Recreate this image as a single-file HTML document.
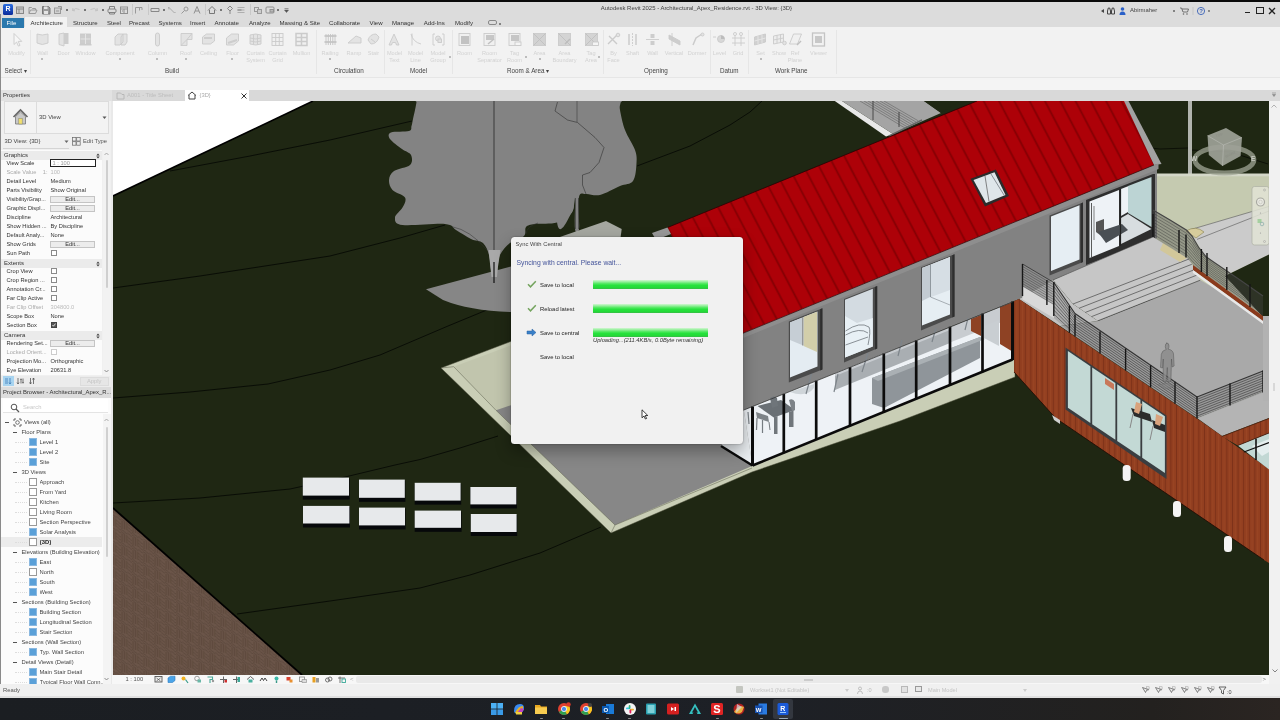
<!DOCTYPE html>
<html><head><meta charset="utf-8"><title>Autodesk Revit 2025</title>
<style>
*{box-sizing:border-box;margin:0;padding:0}
html,body{width:1280px;height:720px;overflow:hidden;background:#000}
body{font-family:"Liberation Sans",sans-serif;font-size:7px;color:#333;position:relative}
#app{position:absolute;left:0;top:0;width:1280px;height:720px;overflow:hidden;background:#f0f0f0;will-change:transform}
.abs{position:absolute}
.t{position:absolute;white-space:nowrap;line-height:1}
/* title / ribbon */
#topblack{left:0;top:0;width:1280px;height:1.6px;background:#0a0a0a}
#titlebar{left:0;top:2px;width:1280px;height:26px;background:#dcdcdc}
#ribbon{left:0;top:27px;width:1280px;height:50px;background:#f2f2f2}
#optbar{left:0;top:77px;width:1280px;height:13px;background:#f4f4f4;border-top:1px solid #e6e6e6}
#tabbar{left:0;top:90px;width:1280px;height:11px;background:#d9d9d9}
.rt{position:absolute;top:19.1px;font-size:6.1px;color:#333;white-space:nowrap;line-height:8px}
.rl{position:absolute;font-size:5.6px;color:#d2d2d2;white-space:nowrap;line-height:7px;text-align:center}
.pt{position:absolute;top:67px;font-size:6.3px;color:#444;white-space:nowrap;line-height:8px}
/* left panel */
#left{left:0;top:90px;width:112px;height:594px;background:#f0f0f0}
.pl{position:absolute;left:6.5px;font-size:5.7px;color:#333;white-space:nowrap;line-height:9px;height:9px}
.pv{position:absolute;left:50.5px;font-size:5.7px;color:#333;white-space:nowrap;line-height:9px;height:9px}
.ph{position:absolute;left:1px;width:101px;height:9px;background:#ebebeb;font-size:6px;line-height:9px;padding-left:3px;color:#333}
.btn{position:absolute;left:50px;width:45px;height:7px;border:1px solid #c4c4c4;background:#ececec;font-size:5.7px;line-height:5.5px;text-align:center;color:#333}
.cb{position:absolute;left:51px;width:6px;height:6px;border:1px solid #8a8a8a;background:#fff}
.tr{position:absolute;font-size:5.8px;color:#444;white-space:nowrap;line-height:10px;height:10px}
.ic{position:absolute;left:29px;width:8px;height:8px;border:1px solid #999;background:#fff}
.ic.b{background:#5aa0d8;border-color:#8ab8e0}
.mn{position:absolute;width:4px;height:1px;background:#555}
</style></head><body><div id="app">
<svg class="abs" style="left:113px;top:101px" width="1156" height="574" viewBox="113 101 1156 574">
<defs>
<pattern id="hatch" width="11" height="13" patternUnits="userSpaceOnUse" patternTransform="skewY(18)"><rect width="11" height="13" fill="#6b5549"/><path d="M1 0v8M3.300 0v8M5.600 0v8" stroke="#574338" stroke-width=".900"/><path d="M6.500 1.500l4.500 2.500M6.500 4.500l4.500 2.500M6.500 7.500l4.500 2.500M0 8.500l6.500 3.500M0 11l4 2M6.500 10.500l4.500 2.500" stroke="#5a463b" stroke-width=".900"/></pattern>
<pattern id="clad" width="5.600" height="10" patternUnits="userSpaceOnUse"><rect width="5.600" height="10" fill="#933f20"/><rect x="0" width="0.9" height="10" fill="#7c3118"/><rect x="2.8" width="0.6" height="10" fill="#9c4826"/></pattern>
<linearGradient id="pg" x1="0" y1="0" x2="0" y2="1"><stop offset="0" stop-color="#d2f6d2"/><stop offset="0.18" stop-color="#9cf0a2"/><stop offset="0.42" stop-color="#4ce85c"/><stop offset="0.6" stop-color="#26e23c"/><stop offset="0.86" stop-color="#24d838"/><stop offset="1" stop-color="#3cb84a"/></linearGradient>
<clipPath id="roofclip"><polygon points="667.5,227.5 977,101 1124.6,101 1154,165 724,341"/></clipPath>
<clipPath id="vp"><rect x="113" y="101" width="1156" height="574"/></clipPath>
</defs>
<g clip-path="url(#vp)">
<rect x="113" y="101" width="1156" height="574" fill="#1f2713"/>
<polygon points="113.0,101.0 313.0,101.0 113.0,196.0" fill="#ffffff" />
<polyline points="313.0,101.0 113.0,196.0" fill="none" stroke="#000" stroke-width="1.6" />
<polyline points="170.0,171.0 250.0,156.0 330.0,140.0 412.0,121.0" fill="none" stroke="#070a04" stroke-width="0.9" />
<polyline points="113.0,288.0 200.0,276.0 330.0,256.0 400.0,238.0 445.0,225.0" fill="none" stroke="#070a04" stroke-width="0.9" />
<polyline points="113.0,398.0 190.0,392.0 268.0,384.0 330.0,370.0 380.0,355.0 448.0,326.0 511.0,300.0" fill="none" stroke="#070a04" stroke-width="0.9" />
<polyline points="113.0,503.0 200.0,498.0 290.0,489.0 345.0,477.0 395.0,465.0 420.0,459.5 460.0,448.0 498.0,436.0" fill="none" stroke="#070a04" stroke-width="0.9" />
<polyline points="237.0,614.0 330.0,601.0 420.0,588.0 470.0,575.0 540.0,553.0 601.0,527.0" fill="none" stroke="#070a04" stroke-width="0.9" />
<polyline points="637.0,166.0 690.0,146.0 730.0,125.0 750.0,112.0 762.0,101.0" fill="none" stroke="#070a04" stroke-width="0.9" />
<polyline points="1131.0,146.0 1160.0,149.0 1188.0,148.0" fill="none" stroke="#070a04" stroke-width="0.8" />
<polyline points="1192.0,150.0 1230.0,152.0 1268.0,164.0" fill="none" stroke="#070a04" stroke-width="0.8" />
<polygon points="113.0,508.0 302.0,675.0 113.0,675.0" fill="url(#hatch)" />
<polyline points="113.0,508.0 302.0,675.0" fill="none" stroke="#000" stroke-width="1.8" />
<path d="M557.0 96.0 C567.7 75.0 610.4 94.8 621.0 96.0 C631.6 97.2 620.7 100.7 620.5 103.0 C620.3 105.3 619.2 105.5 620.0 110.0 C620.8 114.5 622.5 123.3 625.0 130.0 C627.5 136.7 633.1 144.5 635.0 150.0 C636.9 155.5 636.8 157.8 636.5 163.0 C636.2 168.2 635.8 177.2 633.0 181.0 C630.2 184.8 625.5 183.7 620.0 186.0 C614.5 188.3 605.7 193.7 600.0 195.0 C594.3 196.3 589.5 193.7 586.0 194.0 C582.5 194.3 580.2 191.2 579.0 197.0 C577.8 202.8 579.7 223.7 579.0 229.0 C578.3 234.3 575.7 234.2 575.0 229.0 C574.3 223.8 575.5 200.8 575.0 198.0 C574.5 195.2 575.0 208.0 572.0 212.0 C569.0 216.0 559.5 241.3 557.0 222.0 C554.5 202.7 546.3 117.0 557.0 96.0Z" fill="#838383" />
<path d="M416.5 96.0 C392.9 97.0 416.8 99.7 416.5 102.0 C416.2 104.3 415.6 107.2 415.0 110.0 C414.4 112.8 413.6 116.3 413.0 119.0 C412.4 121.7 412.2 124.0 411.5 126.0 C410.8 128.0 412.4 129.9 409.0 131.0 C405.6 132.1 394.2 131.2 391.0 132.5 C387.8 133.8 388.2 136.2 390.0 139.0 C391.8 141.8 398.5 146.3 402.0 149.0 C405.5 151.7 409.7 152.3 411.0 155.0 C412.3 157.7 412.8 162.3 410.0 165.0 C407.2 167.7 397.5 168.5 394.0 171.0 C390.5 173.5 389.2 176.8 389.0 180.0 C388.8 183.2 389.8 187.1 392.5 190.0 C395.2 192.9 403.3 194.6 405.0 197.5 C406.7 200.4 404.2 204.2 402.5 207.5 C400.8 210.8 395.0 214.6 395.0 217.5 C395.0 220.4 394.2 223.9 402.5 225.0 C410.8 226.1 436.1 223.2 445.0 224.0 C453.9 224.8 451.7 227.5 456.0 230.0 C460.3 232.5 466.5 236.8 471.0 239.0 C475.5 241.2 480.0 240.3 483.0 243.0 C486.0 245.7 487.7 250.5 489.0 255.0 C490.3 259.5 490.6 266.3 491.0 270.0 C491.4 273.7 490.5 275.8 491.5 277.0 C492.5 278.2 496.0 278.2 497.0 277.0 C498.0 275.8 497.0 273.7 497.5 270.0 C498.0 266.3 497.9 259.5 500.0 255.0 C502.1 250.5 506.0 246.2 510.0 243.0 C514.0 239.8 521.3 238.7 524.0 236.0 C526.7 233.3 524.2 229.0 526.0 227.0 C527.8 225.0 529.8 224.8 535.0 224.0 C540.2 223.2 550.8 224.4 557.0 222.5 C563.2 220.6 569.0 216.8 572.0 212.5 C575.0 208.2 573.3 201.6 575.0 197.0 C576.7 192.4 580.8 188.7 582.0 185.0 C583.2 181.3 581.2 177.1 582.5 175.0 C583.8 172.9 587.2 174.6 590.0 172.5 C592.8 170.4 596.7 166.7 599.0 162.5 C601.3 158.3 604.7 151.7 604.0 147.5 C603.3 143.3 599.4 141.7 595.0 137.5 C590.6 133.3 582.2 125.4 577.5 122.5 C572.8 119.6 570.8 121.9 567.0 120.0 C563.2 118.1 556.7 113.7 555.0 111.0 C553.3 108.3 556.5 106.5 557.0 104.0 C557.5 101.5 581.4 97.3 558.0 96.0 C534.6 94.7 440.1 95.0 416.5 96.0Z" fill="#838383" />
<polyline points="557.5,102.0 555.0,111.0 567.5,120.0 577.5,122.5 595.0,137.5 604.0,147.5 599.0,162.5 590.0,172.5 582.5,175.0 582.5,185.0 586.0,194.0" fill="none" stroke="#222" stroke-width="0.5" />
<polyline points="494.0,101.0 494.0,277.0" fill="none" stroke="#1a1a1a" stroke-width="0.7" />
<polyline points="494.0,262.0 494.0,277.0" fill="none" stroke="#111" stroke-width="1.4" />
<polyline points="577.0,101.0 577.0,122.0" fill="none" stroke="#333" stroke-width="0.5" />
<polyline points="575.5,198.0 575.5,229.0" fill="none" stroke="#333" stroke-width="0.6" />
<polyline points="578.5,198.0 578.5,229.0" fill="none" stroke="#333" stroke-width="0.6" />
<path d="M452 226.7 Q470 230 487 250" fill="none" stroke="#333" stroke-width="0.5" />
<path d="M526 234 Q527 226 538 223" fill="none" stroke="#333" stroke-width="0.5" />
<path d="M426 289.3 L512 266.3 L512 312 Q470 311 443 300 Z" fill="#868686" />
<polygon points="557.0,238.0 606.0,221.0 621.7,229.0 620.5,238.0" fill="#a5a7a0" />
<polygon points="488.5,250.0 490.5,268.0 491.5,277.0 497.0,277.0 497.8,268.0 500.5,250.0" fill="#a9a9a9" />
<polyline points="494.0,262.0 494.0,283.0" fill="none" stroke="#111" stroke-width="1.2" />
<polygon points="441.0,368.0 520.0,338.0 760.0,338.0 1015.0,360.0 1015.0,377.0 900.0,421.0 830.0,445.0 800.0,455.5 752.0,472.0 611.0,533.0" fill="#c9ceb6" stroke="#4a4d3a" stroke-width="0.5" />
<polygon points="453.7,366.7 520.0,342.0 520.0,404.0 496.0,410.3" fill="#c1c5ad" />
<polygon points="496.0,410.3 520.0,402.0 760.0,402.0 752.0,466.0 615.0,525.0" fill="#878787" />
<polyline points="453.7,366.7 496.0,410.3 615.0,525.0" fill="none" stroke="#5a5d4a" stroke-width="0.5" />
<polyline points="615.0,525.0 752.0,468.0" fill="none" stroke="#5a5d4a" stroke-width="0.5" />
<polyline points="441.0,368.0 453.7,366.7" fill="none" stroke="#5a5d4a" stroke-width="0.5" />
<polyline points="611.0,533.0 615.0,525.0" fill="none" stroke="#5a5d4a" stroke-width="0.5" />
<rect x="302.8" y="478.6" width="46.9" height="21.0" fill="#06080a"/>
<rect x="302.8" y="477.6" width="46.2" height="18.0" fill="#e7e9eb"/>
<rect x="359.0" y="480.6" width="46.4" height="21.2" fill="#06080a"/>
<rect x="359.0" y="479.6" width="45.8" height="18.2" fill="#e7e9eb"/>
<rect x="414.7" y="483.8" width="46.5" height="20.8" fill="#06080a"/>
<rect x="414.7" y="482.8" width="45.9" height="17.8" fill="#e7e9eb"/>
<rect x="470.4" y="488.0" width="46.5" height="20.4" fill="#06080a"/>
<rect x="470.4" y="487.0" width="45.9" height="17.4" fill="#e7e9eb"/>
<rect x="303.0" y="506.9" width="47.0" height="20.6" fill="#06080a"/>
<rect x="303.0" y="505.9" width="46.4" height="17.6" fill="#e7e9eb"/>
<rect x="359.0" y="508.6" width="46.6" height="20.8" fill="#06080a"/>
<rect x="359.0" y="507.6" width="46.0" height="17.8" fill="#e7e9eb"/>
<rect x="414.7" y="511.6" width="46.9" height="20.2" fill="#06080a"/>
<rect x="414.7" y="510.6" width="46.3" height="17.2" fill="#e7e9eb"/>
<rect x="470.8" y="515.0" width="46.4" height="21.0" fill="#06080a"/>
<rect x="470.8" y="514.0" width="45.8" height="18.0" fill="#e7e9eb"/>
<polygon points="834.8,101.0 842.0,101.0 893.0,134.0 886.0,136.5" fill="#e8e8e8" />
<polygon points="842.0,101.0 924.0,101.0 941.0,113.0 893.0,134.0" fill="#a4a4a4" />
<polyline points="860.0,101.0 905.0,128.0" fill="none" stroke="#444" stroke-width="0.4" />
<polyline points="864.0,101.0 907.2,126.8" fill="none" stroke="#444" stroke-width="0.4" />
<polyline points="868.0,101.0 909.4,125.6" fill="none" stroke="#444" stroke-width="0.4" />
<polyline points="872.0,101.0 911.6,124.4" fill="none" stroke="#444" stroke-width="0.4" />
<polyline points="876.0,101.0 913.8,123.2" fill="none" stroke="#444" stroke-width="0.4" />
<polyline points="880.0,101.0 916.0,122.0" fill="none" stroke="#444" stroke-width="0.4" />
<polyline points="884.0,101.0 918.2,120.8" fill="none" stroke="#444" stroke-width="0.4" />
<polyline points="873.0,101.0 873.0,120.0" fill="none" stroke="#333" stroke-width="0.8" />
<polyline points="899.0,112.0 899.0,127.0" fill="none" stroke="#333" stroke-width="0.8" />
<polyline points="889.0,136.0 922.0,120.0" fill="none" stroke="#666" stroke-width="1.5" />
<polygon points="924.0,101.0 960.0,101.0 941.0,113.0" fill="#1f2713" />
<rect x="1188" y="101" width="4" height="74" fill="#b2b4ae"/>
<polygon points="1153.0,176.0 1269.0,176.0 1269.0,330.0 1153.0,330.0" fill="#c5cab0" />
<rect x="1153" y="173.5" width="116" height="2.8" fill="#d4d7c8"/>
<polygon points="1188.7,230.0 1269.0,206.5 1269.0,254.5 1231.0,273.0 1206.0,256.7 1195.0,240.0" fill="#cbcbcb" />
<polyline points="1190.0,229.8 1269.0,206.5" fill="none" stroke="#555" stroke-width="0.6" />
<polyline points="1197.0,239.4 1269.0,211.0" fill="none" stroke="#555" stroke-width="0.6" />
<polygon points="1231.0,273.0 1269.0,254.5 1269.0,330.0 1263.0,317.0 1225.0,276.0" fill="#1f2713" />
<path d="M1186 231 Q1196 225 1204 232 L1196 238Z" fill="#d6cc9c" stroke="#7a7440" stroke-width="0.5" />
<polygon points="700.0,352.0 743.8,333.0 752.5,466.0 721.0,446.0" fill="#9a9a9a" />
<polygon points="743.0,333.0 1157.0,167.0 1157.0,238.0 1053.0,280.0 1019.0,299.0 743.8,410.0" fill="#828282" />
<polygon points="743.8,410.0 1012.5,302.0 1012.5,360.0 752.5,466.0" fill="#eef2f6" />
<polygon points="721.0,446.0 743.8,410.0 752.5,466.0" fill="#e9edf0" />
<polygon points="835.0,373.0 1012.0,303.0 1012.0,318.0 835.0,388.0" fill="#c8ccd0" />
<polygon points="835.0,376.0 950.0,330.0 950.0,343.0 835.0,390.0" fill="#a9aeb2" />
<polygon points="872.0,378.0 980.0,337.0 980.0,358.0 884.0,408.0 872.0,404.0" fill="#8f959a" />
<polygon points="872.0,378.0 980.0,337.0 985.0,339.0 878.0,381.0" fill="#aab0b4" />
<polygon points="1000.0,307.0 1011.5,302.5 1011.5,351.0 1000.0,344.0" fill="#8e4224" />
<polygon points="971.0,319.0 981.0,315.0 981.0,336.0 971.0,331.0" fill="#8e4224" />
<polygon points="984.0,326.0 999.0,320.0 999.0,346.0 984.0,338.0" fill="#c9ced2" />
<polygon points="757.5,406.0 781.0,400.0 795.0,410.0 773.8,417.5" fill="#6a7075" />
<polygon points="774.0,417.0 777.5,416.0 777.5,434.0 774.0,434.0" fill="#70767b" />
<polygon points="789.0,412.0 793.5,410.5 793.5,427.0 789.0,427.0" fill="#70767b" />
<polygon points="756.0,412.0 768.0,416.0 769.0,422.0 757.0,418.0" fill="#7d8388" />
<polyline points="757.0,418.0 756.5,430.0" fill="none" stroke="#767c81" stroke-width="1.2" />
<polyline points="762.5,420.0 762.5,433.0" fill="none" stroke="#767c81" stroke-width="1.2" />
<polyline points="769.0,422.0 770.0,430.0" fill="none" stroke="#767c81" stroke-width="1" />
<path d="M789 400 q4 -2 6 2 l0 8 l-3 1 z" fill="#7d8388" />
<path d="M770 398 q4 -3 7 0 l1 8 l-6 2 z" fill="#6f757a" />
<polyline points="748.0,412.0 749.0,424.0" fill="none" stroke="#7d8388" stroke-width="1.2" />
<path d="M790 392 Q806 398 814 388 L814 384 L790 392Z" fill="#cfd5d9" />
<polyline points="812.0,372.0 806.0,394.0" fill="none" stroke="#7d848a" stroke-width="1.2" />
<polyline points="838.0,374.0 834.0,392.0" fill="none" stroke="#7d848a" stroke-width="1.2" />
<polyline points="868.0,353.0 862.0,372.0" fill="none" stroke="#7d848a" stroke-width="1.2" />
<polyline points="902.0,340.0 898.0,356.0" fill="none" stroke="#7d848a" stroke-width="1.2" />
<polyline points="936.0,328.0 932.0,342.0" fill="none" stroke="#7d848a" stroke-width="1.2" />
<polyline points="968.0,318.0 965.0,330.0" fill="none" stroke="#7d848a" stroke-width="1.2" />
<polyline points="752.5,406.5 752.5,466.0" fill="none" stroke="#0c0c0c" stroke-width="3" />
<polyline points="783.8,393.9 783.8,453.3" fill="none" stroke="#0c0c0c" stroke-width="2.7" />
<polyline points="816.2,380.7 816.2,440.0" fill="none" stroke="#0c0c0c" stroke-width="2.7" />
<polyline points="850.0,367.1 850.0,426.2" fill="none" stroke="#0c0c0c" stroke-width="2.7" />
<polyline points="883.8,353.5 883.8,412.5" fill="none" stroke="#0c0c0c" stroke-width="2.7" />
<polyline points="916.2,340.4 916.2,399.2" fill="none" stroke="#0c0c0c" stroke-width="2.7" />
<polyline points="950.0,326.7 950.0,385.5" fill="none" stroke="#0c0c0c" stroke-width="2.7" />
<polyline points="982.5,313.6 982.5,372.2" fill="none" stroke="#0c0c0c" stroke-width="2.7" />
<polyline points="1012.5,301.5 1012.5,360.0" fill="none" stroke="#0c0c0c" stroke-width="3" />
<polyline points="752.5,465.5 1012.5,359.5" fill="none" stroke="#0a0a0a" stroke-width="2.6" />
<polyline points="721.0,446.0 752.5,465.5" fill="none" stroke="#0a0a0a" stroke-width="2.4" />
<polyline points="743.8,410.0 1012.5,302.0" fill="none" stroke="#333" stroke-width="0.8" />
<polygon points="788.8,321.5 822.4,308.3 822.4,369.5 788.8,382.5" fill="#4b4b4b" />
<polygon points="822.4,308.3 822.4,369.5 820.2,370.4 820.2,309.2" fill="#2e2e2e" />
<polygon points="790.0,322.5 817.5,311.5 817.5,366.5 790.0,377.5" fill="#e4ecf2" />
<polygon points="790.0,322.5 802.0,317.7 802.0,345.0 790.0,340.0" fill="#c6ced5" />
<polygon points="803.6,317.0 817.0,311.7 817.0,352.0 803.6,346.0" fill="#d2ceaa" />
<polyline points="802.8,317.5 802.8,345.5" fill="none" stroke="#6a6a6a" stroke-width="0.9" />
<polygon points="844.0,299.0 877.2,286.0 877.2,348.5 844.0,362.5" fill="#4b4b4b" />
<polygon points="877.2,286.0 877.2,348.5 875.0,349.4 875.0,286.9" fill="#2e2e2e" />
<polygon points="845.0,299.8 872.8,288.7 872.8,346.5 845.0,357.6" fill="#d3dbe1" />
<polygon points="845.0,316.0 857.0,323.0 872.8,318.0 872.8,346.5 845.0,357.6" fill="#e8f0f5" />
<path d="M845.500 331 Q860 321 869 327 Q871 331 868 345 M845.500 335 Q860 327 868 333 M845.500 345 L868 337" fill="none" stroke="#5e666c" stroke-width="0.7" />
<polygon points="921.0,267.3 954.5,254.3 954.5,316.5 921.0,330.5" fill="#4b4b4b" />
<polygon points="954.5,254.3 954.5,316.5 952.3,317.4 952.3,255.2" fill="#2e2e2e" />
<polygon points="922.0,268.0 950.0,257.0 950.0,314.5 922.0,325.5" fill="#e6eef3" />
<polygon points="922.0,268.0 930.0,265.0 930.0,297.0 922.0,301.0" fill="#c3cbd2" />
<polygon points="931.0,264.5 950.0,257.0 950.0,290.0 931.0,297.0" fill="#d6dee4" />
<polyline points="930.5,265.0 930.5,297.0" fill="none" stroke="#7a8288" stroke-width="0.8" />
<polyline points="930.5,297.0 950.0,305.0" fill="none" stroke="#7a8288" stroke-width="0.6" />
<polygon points="1049.5,215.5 1083.0,202.5 1083.0,262.0 1049.5,275.5" fill="#4b4b4b" />
<polygon points="1083.0,202.5 1083.0,262.0 1080.8,262.9 1080.8,203.4" fill="#2e2e2e" />
<polygon points="1051.0,216.5 1079.5,205.3 1079.5,259.5 1051.0,271.0" fill="#e6eef3" />
<polygon points="1086.0,200.0 1153.0,174.0 1155.0,174.0 1155.0,238.0 1086.0,265.0" fill="#2e2e2e" />
<polygon points="1089.5,201.5 1119.0,190.0 1119.0,246.0 1089.5,258.0" fill="#eef2f6" />
<polygon points="1121.0,189.0 1128.0,186.3 1128.0,212.0 1121.0,216.0" fill="#eef2f6" />
<polygon points="1128.0,186.0 1151.5,177.0 1151.5,227.0 1128.0,213.0" fill="#bcd4d4" />
<polygon points="1121.0,218.0 1128.0,214.0 1151.5,229.0 1121.0,244.0" fill="#d8dde0" />
<polygon points="1096.0,222.0 1104.0,219.0 1104.0,238.0 1096.0,232.0" fill="#555" />
<polygon points="1098.0,232.0 1122.0,224.0 1128.0,230.0 1106.0,243.0" fill="#4a4f54" />
<polyline points="1120.5,189.0 1120.5,246.0" fill="none" stroke="#222" stroke-width="1.2" />
<polyline points="1091.5,203.0 1091.5,257.0" fill="none" stroke="#333" stroke-width="0.8" />
<polyline points="1094.0,206.0 1094.0,240.0" fill="none" stroke="#333" stroke-width="0.6" />
<polygon points="667.5,227.5 977.0,101.0 1124.6,101.0 1154.0,165.0 724.0,341.0" fill="#ad0108" />
<g clip-path="url(#roofclip)">
<path d="M667.5 227.5l84 160" stroke="#8a0006" stroke-width="2.4" opacity=".6"/>
<path d="M667.5 227.5l84 160" stroke="#7e0005" stroke-width="1" opacity=".7"/>
<path d="M680.1 222.4l84 160" stroke="#8a0006" stroke-width="2.4" opacity=".6"/>
<path d="M680.1 222.4l84 160" stroke="#7e0005" stroke-width="1" opacity=".7"/>
<path d="M692.7 217.2l84 160" stroke="#8a0006" stroke-width="2.4" opacity=".6"/>
<path d="M692.7 217.2l84 160" stroke="#7e0005" stroke-width="1" opacity=".7"/>
<path d="M705.3 212.1l84 160" stroke="#8a0006" stroke-width="2.4" opacity=".6"/>
<path d="M705.3 212.1l84 160" stroke="#7e0005" stroke-width="1" opacity=".7"/>
<path d="M717.9 206.9l84 160" stroke="#8a0006" stroke-width="2.4" opacity=".6"/>
<path d="M717.9 206.9l84 160" stroke="#7e0005" stroke-width="1" opacity=".7"/>
<path d="M730.5 201.8l84 160" stroke="#8a0006" stroke-width="2.4" opacity=".6"/>
<path d="M730.5 201.8l84 160" stroke="#7e0005" stroke-width="1" opacity=".7"/>
<path d="M743.1 196.6l84 160" stroke="#8a0006" stroke-width="2.4" opacity=".6"/>
<path d="M743.1 196.6l84 160" stroke="#7e0005" stroke-width="1" opacity=".7"/>
<path d="M755.7 191.5l84 160" stroke="#8a0006" stroke-width="2.4" opacity=".6"/>
<path d="M755.7 191.5l84 160" stroke="#7e0005" stroke-width="1" opacity=".7"/>
<path d="M768.3 186.3l84 160" stroke="#8a0006" stroke-width="2.4" opacity=".6"/>
<path d="M768.3 186.3l84 160" stroke="#7e0005" stroke-width="1" opacity=".7"/>
<path d="M780.9 181.2l84 160" stroke="#8a0006" stroke-width="2.4" opacity=".6"/>
<path d="M780.9 181.2l84 160" stroke="#7e0005" stroke-width="1" opacity=".7"/>
<path d="M793.5 176.0l84 160" stroke="#8a0006" stroke-width="2.4" opacity=".6"/>
<path d="M793.5 176.0l84 160" stroke="#7e0005" stroke-width="1" opacity=".7"/>
<path d="M806.1 170.9l84 160" stroke="#8a0006" stroke-width="2.4" opacity=".6"/>
<path d="M806.1 170.9l84 160" stroke="#7e0005" stroke-width="1" opacity=".7"/>
<path d="M818.7 165.7l84 160" stroke="#8a0006" stroke-width="2.4" opacity=".6"/>
<path d="M818.7 165.7l84 160" stroke="#7e0005" stroke-width="1" opacity=".7"/>
<path d="M831.3 160.6l84 160" stroke="#8a0006" stroke-width="2.4" opacity=".6"/>
<path d="M831.3 160.6l84 160" stroke="#7e0005" stroke-width="1" opacity=".7"/>
<path d="M843.9 155.4l84 160" stroke="#8a0006" stroke-width="2.4" opacity=".6"/>
<path d="M843.9 155.4l84 160" stroke="#7e0005" stroke-width="1" opacity=".7"/>
<path d="M856.5 150.3l84 160" stroke="#8a0006" stroke-width="2.4" opacity=".6"/>
<path d="M856.5 150.3l84 160" stroke="#7e0005" stroke-width="1" opacity=".7"/>
<path d="M869.1 145.1l84 160" stroke="#8a0006" stroke-width="2.4" opacity=".6"/>
<path d="M869.1 145.1l84 160" stroke="#7e0005" stroke-width="1" opacity=".7"/>
<path d="M881.7 140.0l84 160" stroke="#8a0006" stroke-width="2.4" opacity=".6"/>
<path d="M881.7 140.0l84 160" stroke="#7e0005" stroke-width="1" opacity=".7"/>
<path d="M894.3 134.8l84 160" stroke="#8a0006" stroke-width="2.4" opacity=".6"/>
<path d="M894.3 134.8l84 160" stroke="#7e0005" stroke-width="1" opacity=".7"/>
<path d="M906.9 129.7l84 160" stroke="#8a0006" stroke-width="2.4" opacity=".6"/>
<path d="M906.9 129.7l84 160" stroke="#7e0005" stroke-width="1" opacity=".7"/>
<path d="M919.5 124.5l84 160" stroke="#8a0006" stroke-width="2.4" opacity=".6"/>
<path d="M919.5 124.5l84 160" stroke="#7e0005" stroke-width="1" opacity=".7"/>
<path d="M932.1 119.4l84 160" stroke="#8a0006" stroke-width="2.4" opacity=".6"/>
<path d="M932.1 119.4l84 160" stroke="#7e0005" stroke-width="1" opacity=".7"/>
<path d="M944.7 114.2l84 160" stroke="#8a0006" stroke-width="2.4" opacity=".6"/>
<path d="M944.7 114.2l84 160" stroke="#7e0005" stroke-width="1" opacity=".7"/>
<path d="M957.3 109.1l84 160" stroke="#8a0006" stroke-width="2.4" opacity=".6"/>
<path d="M957.3 109.1l84 160" stroke="#7e0005" stroke-width="1" opacity=".7"/>
<path d="M969.9 103.9l84 160" stroke="#8a0006" stroke-width="2.4" opacity=".6"/>
<path d="M969.9 103.9l84 160" stroke="#7e0005" stroke-width="1" opacity=".7"/>
<path d="M982.5 98.8l84 160" stroke="#8a0006" stroke-width="2.4" opacity=".6"/>
<path d="M982.5 98.8l84 160" stroke="#7e0005" stroke-width="1" opacity=".7"/>
<path d="M995.1 93.6l84 160" stroke="#8a0006" stroke-width="2.4" opacity=".6"/>
<path d="M995.1 93.6l84 160" stroke="#7e0005" stroke-width="1" opacity=".7"/>
<path d="M1007.7 88.5l84 160" stroke="#8a0006" stroke-width="2.4" opacity=".6"/>
<path d="M1007.7 88.5l84 160" stroke="#7e0005" stroke-width="1" opacity=".7"/>
<path d="M1020.3 83.3l84 160" stroke="#8a0006" stroke-width="2.4" opacity=".6"/>
<path d="M1020.3 83.3l84 160" stroke="#7e0005" stroke-width="1" opacity=".7"/>
<path d="M1032.9 78.2l84 160" stroke="#8a0006" stroke-width="2.4" opacity=".6"/>
<path d="M1032.9 78.2l84 160" stroke="#7e0005" stroke-width="1" opacity=".7"/>
<path d="M1045.5 73.0l84 160" stroke="#8a0006" stroke-width="2.4" opacity=".6"/>
<path d="M1045.5 73.0l84 160" stroke="#7e0005" stroke-width="1" opacity=".7"/>
<path d="M1058.1 67.9l84 160" stroke="#8a0006" stroke-width="2.4" opacity=".6"/>
<path d="M1058.1 67.9l84 160" stroke="#7e0005" stroke-width="1" opacity=".7"/>
<path d="M1070.7 62.7l84 160" stroke="#8a0006" stroke-width="2.4" opacity=".6"/>
<path d="M1070.7 62.7l84 160" stroke="#7e0005" stroke-width="1" opacity=".7"/>
<path d="M1083.3 57.6l84 160" stroke="#8a0006" stroke-width="2.4" opacity=".6"/>
<path d="M1083.3 57.6l84 160" stroke="#7e0005" stroke-width="1" opacity=".7"/>
<path d="M1095.9 52.4l84 160" stroke="#8a0006" stroke-width="2.4" opacity=".6"/>
<path d="M1095.9 52.4l84 160" stroke="#7e0005" stroke-width="1" opacity=".7"/>
<path d="M1108.5 47.3l84 160" stroke="#8a0006" stroke-width="2.4" opacity=".6"/>
<path d="M1108.5 47.3l84 160" stroke="#7e0005" stroke-width="1" opacity=".7"/>
<path d="M1121.1 42.1l84 160" stroke="#8a0006" stroke-width="2.4" opacity=".6"/>
<path d="M1121.1 42.1l84 160" stroke="#7e0005" stroke-width="1" opacity=".7"/>
<path d="M1133.7 37.0l84 160" stroke="#8a0006" stroke-width="2.4" opacity=".6"/>
<path d="M1133.7 37.0l84 160" stroke="#7e0005" stroke-width="1" opacity=".7"/>
<path d="M1146.3 31.8l84 160" stroke="#8a0006" stroke-width="2.4" opacity=".6"/>
<path d="M1146.3 31.8l84 160" stroke="#7e0005" stroke-width="1" opacity=".7"/>
<path d="M1158.9 26.7l84 160" stroke="#8a0006" stroke-width="2.4" opacity=".6"/>
<path d="M1158.9 26.7l84 160" stroke="#7e0005" stroke-width="1" opacity=".7"/>
<path d="M1171.5 21.5l84 160" stroke="#8a0006" stroke-width="2.4" opacity=".6"/>
<path d="M1171.5 21.5l84 160" stroke="#7e0005" stroke-width="1" opacity=".7"/>
<path d="M1184.1 16.4l84 160" stroke="#8a0006" stroke-width="2.4" opacity=".6"/>
<path d="M1184.1 16.4l84 160" stroke="#7e0005" stroke-width="1" opacity=".7"/>
<path d="M1196.7 11.2l84 160" stroke="#8a0006" stroke-width="2.4" opacity=".6"/>
<path d="M1196.7 11.2l84 160" stroke="#7e0005" stroke-width="1" opacity=".7"/>
<path d="M1209.3 6.1l84 160" stroke="#8a0006" stroke-width="2.4" opacity=".6"/>
<path d="M1209.3 6.1l84 160" stroke="#7e0005" stroke-width="1" opacity=".7"/>
<path d="M1221.9 0.9l84 160" stroke="#8a0006" stroke-width="2.4" opacity=".6"/>
<path d="M1221.9 0.9l84 160" stroke="#7e0005" stroke-width="1" opacity=".7"/>
<path d="M1234.5 -4.2l84 160" stroke="#8a0006" stroke-width="2.4" opacity=".6"/>
<path d="M1234.5 -4.2l84 160" stroke="#7e0005" stroke-width="1" opacity=".7"/>
<path d="M1247.1 -9.4l84 160" stroke="#8a0006" stroke-width="2.4" opacity=".6"/>
<path d="M1247.1 -9.4l84 160" stroke="#7e0005" stroke-width="1" opacity=".7"/>
<path d="M1259.7 -14.5l84 160" stroke="#8a0006" stroke-width="2.4" opacity=".6"/>
<path d="M1259.7 -14.5l84 160" stroke="#7e0005" stroke-width="1" opacity=".7"/>
<path d="M1272.3 -19.7l84 160" stroke="#8a0006" stroke-width="2.4" opacity=".6"/>
<path d="M1272.3 -19.7l84 160" stroke="#7e0005" stroke-width="1" opacity=".7"/>
<path d="M1284.9 -24.8l84 160" stroke="#8a0006" stroke-width="2.4" opacity=".6"/>
<path d="M1284.9 -24.8l84 160" stroke="#7e0005" stroke-width="1" opacity=".7"/>
<path d="M1297.5 -30.0l84 160" stroke="#8a0006" stroke-width="2.4" opacity=".6"/>
<path d="M1297.5 -30.0l84 160" stroke="#7e0005" stroke-width="1" opacity=".7"/>
</g>
<polygon points="1124.0,101.0 1128.5,101.0 1161.5,164.0 1154.0,165.0" fill="#a2a2a2" />
<polygon points="1154.0,165.0 1158.5,163.5 1158.5,169.0 743.0,338.0 743.0,333.0" fill="#8e8e8e" />
<polyline points="724.0,341.0 1154.0,165.0" fill="none" stroke="#3a0004" stroke-width="0.7" />
<polyline points="667.5,227.5 977.0,101.0" fill="none" stroke="#2a0003" stroke-width="0.8" />
<polygon points="652.0,233.0 667.5,227.5 671.0,234.0 656.0,240.0" fill="#999" />
<polygon points="970.5,178.7 995.8,169.4 1009.0,196.0 985.0,206.5" fill="#2b2b2b" />
<polygon points="973.5,180.0 994.5,172.3 1005.5,195.0 986.0,203.0" fill="#dfe6ea" />
<polyline points="985.0,176.0 989.0,201.5" fill="none" stroke="#555" stroke-width="0.7" />
<polyline points="991.0,174.0 1004.0,195.0" fill="none" stroke="#8a9096" stroke-width="1" />
<polygon points="1053.0,280.0 1153.0,237.0 1189.0,259.0 1200.0,280.0 1098.0,321.0 1073.0,304.0" fill="#c6c6c6" />
<polygon points="1098.0,321.0 1200.0,280.0 1269.0,320.0 1269.0,389.0 1197.0,418.0 1060.0,326.0" fill="#a9a9a9" />
<polygon points="1019.0,299.0 1053.0,280.0 1073.0,304.0 1098.0,321.0 1060.0,326.0" fill="#c2c2c2" />
<polygon points="1197.0,418.0 1269.0,389.0 1269.0,418.0 1222.0,436.0" fill="#b4b4b4" />
<polyline points="1073.0,304.0 1189.0,259.0" fill="none" stroke="#333" stroke-width="0.6" />
<polyline points="1079.2,308.2 1191.8,264.3" fill="none" stroke="#333" stroke-width="0.6" />
<polyline points="1085.4,312.4 1194.6,269.6" fill="none" stroke="#333" stroke-width="0.6" />
<polyline points="1091.6,316.6 1197.4,274.9" fill="none" stroke="#333" stroke-width="0.6" />
<polyline points="1097.8,320.8 1200.2,280.2" fill="none" stroke="#333" stroke-width="0.6" />
<polyline points="1053.0,280.0 1153.0,237.0" fill="none" stroke="#444" stroke-width="0.5" />
<polygon points="1014.0,301.0 1019.0,299.0 1197.0,418.5 1269.0,469.0 1269.0,563.0 1264.0,560.0 1055.5,418.0 1014.0,372.0" fill="url(#clad)" />
<polyline points="1014.0,372.0 1055.5,418.0 1264.0,560.0" fill="none" stroke="#1a0a04" stroke-width="0.8" />
<polygon points="1237.8,445.5 1269.0,433.0 1269.0,469.5" fill="#c2d8d4" />
<polygon points="1252.0,446.0 1269.0,439.0 1269.0,452.0 1262.0,456.0" fill="#e4eeee" />
<polyline points="1256.0,438.5 1256.0,460.0" fill="none" stroke="#111" stroke-width="1.6" />
<polyline points="1244.0,452.0 1269.0,442.5" fill="none" stroke="#111" stroke-width="1.3" />
<polygon points="1222.0,436.5 1269.0,418.5 1269.0,433.0 1237.8,445.5" fill="url(#clad)" />
<polyline points="1222.0,436.5 1269.0,418.5" fill="none" stroke="#5a2410" stroke-width="0.7" />
<polyline points="1237.8,445.5 1269.0,433.0" fill="none" stroke="#3a1608" stroke-width="0.7" />
<polygon points="1065.5,347.5 1166.5,415.5 1166.5,479.0 1065.5,409.5" fill="#3a3d40" />
<polygon points="1067.9,351.0 1090.4,366.2 1090.4,423.0 1067.9,407.8" fill="#c3d9d5" />
<polygon points="1092.2,367.4 1115.4,383.0 1115.4,439.8 1092.2,424.2" fill="#c3d9d5" />
<polygon points="1117.2,384.2 1140.4,399.8 1140.4,456.6 1117.2,441.0" fill="#c3d9d5" />
<polygon points="1142.2,401.0 1164.9,416.3 1164.9,473.1 1142.2,457.8" fill="#c3d9d5" />
<polygon points="1131.0,408.0 1150.0,414.0 1152.0,422.0 1134.0,416.0" fill="#2c2c2c" />
<polygon points="1136.0,402.0 1142.0,404.0 1139.0,414.0 1134.0,412.0" fill="#d9a27c" />
<polygon points="1152.0,420.0 1165.0,425.0 1165.0,432.0 1154.0,428.0" fill="#2c2c2c" />
<polygon points="1156.0,414.0 1163.0,417.0 1160.0,426.0 1155.0,424.0" fill="#d9a27c" />
<polyline points="1133.0,414.0 1130.0,428.0" fill="none" stroke="#888" stroke-width="1" />
<polyline points="1153.0,426.0 1150.0,440.0" fill="none" stroke="#888" stroke-width="1" />
<polygon points="1105.0,378.0 1114.0,384.0 1114.0,390.0 1105.0,384.0" fill="#c8785a" />
<rect x="1122.7" y="465.0" width="8" height="16" rx="3.5" fill="#f4f4f4"/>
<rect x="1173.0" y="501.0" width="8" height="16" rx="3.5" fill="#f4f4f4"/>
<rect x="1224.0" y="536.0" width="8" height="16" rx="3.5" fill="#f4f4f4"/>
<polygon points="1052.0,415.0 1060.0,420.0 1060.0,424.0 1054.0,420.0" fill="#cfcfcf" />
<polygon points="1053.8,282.5 1075.0,313.5 1197.0,397.0 1197.0,418.5 1075.0,336.6 1053.8,318.0" fill="rgba(110,110,110,0.26)" />
<polyline points="1053.8,286.4 1075.0,316.1 1197.0,399.4" fill="none" stroke="#222" stroke-width="0.5" />
<polyline points="1053.8,290.4 1075.0,318.6 1197.0,401.8" fill="none" stroke="#222" stroke-width="0.5" />
<polyline points="1053.8,294.3 1075.0,321.2 1197.0,404.2" fill="none" stroke="#222" stroke-width="0.5" />
<polyline points="1053.8,298.3 1075.0,323.8 1197.0,406.6" fill="none" stroke="#222" stroke-width="0.5" />
<polyline points="1053.8,302.2 1075.0,326.3 1197.0,408.9" fill="none" stroke="#222" stroke-width="0.5" />
<polyline points="1053.8,306.2 1075.0,328.9 1197.0,411.3" fill="none" stroke="#222" stroke-width="0.5" />
<polyline points="1053.8,310.1 1075.0,331.5 1197.0,413.7" fill="none" stroke="#222" stroke-width="0.5" />
<polyline points="1053.8,314.1 1075.0,334.0 1197.0,416.1" fill="none" stroke="#222" stroke-width="0.5" />
<polyline points="1053.8,282.5 1075.0,313.5 1197.0,397.0" fill="none" stroke="#333" stroke-width="1.1" />
<polygon points="1197.0,397.0 1263.0,371.0 1263.0,392.5 1197.0,418.5" fill="rgba(110,110,110,0.26)" />
<polyline points="1197.0,399.4 1263.0,373.4" fill="none" stroke="#222" stroke-width="0.5" />
<polyline points="1197.0,401.8 1263.0,375.8" fill="none" stroke="#222" stroke-width="0.5" />
<polyline points="1197.0,404.2 1263.0,378.2" fill="none" stroke="#222" stroke-width="0.5" />
<polyline points="1197.0,406.6 1263.0,380.6" fill="none" stroke="#222" stroke-width="0.5" />
<polyline points="1197.0,408.9 1263.0,382.9" fill="none" stroke="#222" stroke-width="0.5" />
<polyline points="1197.0,411.3 1263.0,385.3" fill="none" stroke="#222" stroke-width="0.5" />
<polyline points="1197.0,413.7 1263.0,387.7" fill="none" stroke="#222" stroke-width="0.5" />
<polyline points="1197.0,416.1 1263.0,390.1" fill="none" stroke="#222" stroke-width="0.5" />
<polyline points="1197.0,397.0 1263.0,371.0" fill="none" stroke="#333" stroke-width="1.1" />
<polyline points="1069.4,332.8 1069.4,305.8" fill="none" stroke="#161616" stroke-width="1.4" />
<polyline points="1075.0,336.6 1075.0,314.6" fill="none" stroke="#161616" stroke-width="1.4" />
<polyline points="1100.0,353.4 1100.0,331.4" fill="none" stroke="#161616" stroke-width="1.4" />
<polyline points="1125.6,370.6 1125.6,348.6" fill="none" stroke="#161616" stroke-width="1.4" />
<polyline points="1150.6,387.3 1150.6,365.3" fill="none" stroke="#161616" stroke-width="1.4" />
<polyline points="1175.0,403.7 1175.0,381.7" fill="none" stroke="#161616" stroke-width="1.4" />
<polyline points="1197.0,418.5 1197.0,396.5" fill="none" stroke="#161616" stroke-width="1.4" />
<polyline points="1230.0,405.5 1230.0,383.5" fill="none" stroke="#161616" stroke-width="1.4" />
<polyline points="1263.0,392.5 1263.0,370.5" fill="none" stroke="#161616" stroke-width="1.4" />
<polygon points="1022.5,286.0 1053.8,304.5 1053.8,318.0 1022.5,299.5" fill="#d9d9d9" />
<polygon points="1022.5,286.0 1053.8,304.5 1053.8,282.5 1022.5,264.0" fill="rgba(150,150,150,0.55)" />
<polyline points="1022.5,286.0 1053.8,304.5" fill="none" stroke="#3a3a3a" stroke-width="0.45" />
<polyline points="1022.5,283.6 1053.8,302.1" fill="none" stroke="#3a3a3a" stroke-width="0.45" />
<polyline points="1022.5,281.1 1053.8,299.6" fill="none" stroke="#3a3a3a" stroke-width="0.45" />
<polyline points="1022.5,278.7 1053.8,297.2" fill="none" stroke="#3a3a3a" stroke-width="0.45" />
<polyline points="1022.5,276.2 1053.8,294.7" fill="none" stroke="#3a3a3a" stroke-width="0.45" />
<polyline points="1022.5,273.8 1053.8,292.3" fill="none" stroke="#3a3a3a" stroke-width="0.45" />
<polyline points="1022.5,271.3 1053.8,289.8" fill="none" stroke="#3a3a3a" stroke-width="0.45" />
<polyline points="1022.5,268.9 1053.8,287.4" fill="none" stroke="#3a3a3a" stroke-width="0.45" />
<polyline points="1022.5,266.4 1053.8,284.9" fill="none" stroke="#3a3a3a" stroke-width="0.45" />
<polyline points="1022.5,264.0 1053.8,282.5" fill="none" stroke="#3a3a3a" stroke-width="0.9" />
<polyline points="1022.5,296.0 1022.5,264.0" fill="none" stroke="#161616" stroke-width="1.4" />
<polyline points="1046.9,305.0 1046.9,280.0" fill="none" stroke="#161616" stroke-width="1.4" />
<polyline points="1053.8,316.0 1053.8,282.0" fill="none" stroke="#161616" stroke-width="1.4" />
<polygon points="1163.0,243.0 1187.0,258.0 1180.0,262.0 1160.0,250.0" fill="#d2c79a" />
<polygon points="1193.0,265.0 1263.0,316.0 1263.0,321.0 1193.0,270.0" fill="#8a3a1c" />
<polygon points="1193.0,270.0 1263.0,321.0 1263.0,324.0 1193.0,273.0" fill="#e8e8e8" />
<polygon points="1153.0,210.0 1170.0,220.0 1186.7,230.3 1192.0,236.0 1199.0,248.0 1206.0,256.7 1215.0,263.0 1241.5,281.0 1263.0,296.0 1263.0,316.0 1241.5,300.0 1215.0,281.0 1200.0,271.0 1193.0,265.0 1187.0,258.0 1170.0,247.5 1153.0,237.0" fill="rgba(70,70,70,0.38)" />
<polyline points="1153.0,213.0 1170.0,223.1 1186.7,233.4 1192.1,239.2 1199.1,250.6 1207.0,259.4 1217.9,267.1 1243.9,284.9" fill="none" stroke="#333" stroke-width="0.4" />
<polyline points="1153.0,216.0 1170.0,226.1 1186.8,236.5 1192.2,242.4 1199.2,253.1 1208.0,262.1 1220.9,271.2 1246.3,288.8" fill="none" stroke="#333" stroke-width="0.4" />
<polyline points="1153.0,219.0 1170.0,229.2 1186.8,239.5 1192.3,245.7 1199.3,255.7 1209.0,264.8 1223.8,275.3 1248.7,292.7" fill="none" stroke="#333" stroke-width="0.4" />
<polyline points="1153.0,222.0 1170.0,232.2 1186.8,242.6 1192.4,248.9 1199.4,258.2 1210.0,267.5 1226.8,279.4 1251.1,296.6" fill="none" stroke="#333" stroke-width="0.4" />
<polyline points="1153.0,225.0 1170.0,235.3 1186.9,245.7 1192.6,252.1 1199.6,260.8 1211.0,270.2 1229.7,283.6 1253.4,300.4" fill="none" stroke="#333" stroke-width="0.4" />
<polyline points="1153.0,228.0 1170.0,238.3 1186.9,248.8 1192.7,255.3 1199.7,263.3 1212.0,272.9 1232.7,287.7 1255.8,304.3" fill="none" stroke="#333" stroke-width="0.4" />
<polyline points="1153.0,231.0 1170.0,241.4 1186.9,251.8 1192.8,258.6 1199.8,265.9 1213.0,275.6 1235.6,291.8 1258.2,308.2" fill="none" stroke="#333" stroke-width="0.4" />
<polyline points="1153.0,234.0 1170.0,244.4 1187.0,254.9 1192.9,261.8 1199.9,268.4 1214.0,278.3 1238.6,295.9 1260.6,312.1" fill="none" stroke="#333" stroke-width="0.4" />
<polyline points="1153.0,210.0 1170.0,220.0 1186.7,230.3 1192.0,236.0 1199.0,248.0 1206.0,256.7 1215.0,263.0 1241.5,281.0 1263.0,296.0" fill="none" stroke="#444" stroke-width="1.2" />
<polyline points="1153.0,237.0 1153.0,214.0" fill="none" stroke="#161616" stroke-width="1.4" />
<polyline points="1179.0,253.0 1179.0,230.0" fill="none" stroke="#161616" stroke-width="1.4" />
<polyline points="1186.0,257.5 1186.0,234.5" fill="none" stroke="#161616" stroke-width="1.4" />
<polyline points="1201.4,272.0 1201.4,249.0" fill="none" stroke="#161616" stroke-width="1.4" />
<polyline points="1207.0,276.0 1207.0,253.0" fill="none" stroke="#161616" stroke-width="1.4" />
<polyline points="1226.8,290.0 1226.8,267.0" fill="none" stroke="#161616" stroke-width="1.4" />
<polyline points="1250.0,307.0 1250.0,284.0" fill="none" stroke="#161616" stroke-width="1.4" />
<rect x="1263" y="316" width="6" height="85" fill="#b2b2b2"/>
<path d="M1166.5 343 q2.5 0 2.5 3 q0 2 -1 3 q5 1 5.5 5 l0.6 12 l-2 1 l-0.6 -8 l-0.6 22 l-3 0.5 l-0.6 -14 l-1.2 14 l-3 -0.5 l0.2 -22 l-0.8 9 l-2 -0.6 l0.8 -13 q0.6 -4 5 -5 q-1 -1 -1 -3 q0 -3 1.8 -3.4z" fill="rgba(140,140,140,0.85)" stroke="#555" stroke-width="0.5" />
<path d="M1158 385 l8 4 l8 -3 l-7 -3z" fill="rgba(130,130,130,0.6)" stroke="#666" stroke-width="0.4" />
<ellipse cx="1224.4" cy="160" rx="29.5" ry="13" fill="none" stroke="rgba(160,165,150,0.75)" stroke-width="5"/>
<polygon points="1226.0,128.0 1242.0,137.5 1240.6,156.0 1222.5,166.0 1208.8,155.0 1207.5,135.6" fill="rgba(158,162,152,0.92)" />
<polyline points="1207.5,135.6 1223.5,145.0 1242.0,137.5" fill="none" stroke="rgba(190,192,186,0.9)" stroke-width="0.6" />
<polyline points="1223.5,145.0 1222.5,166.0" fill="none" stroke="rgba(190,192,186,0.9)" stroke-width="0.6" />
<text x="1191" y="161" font-family="Liberation Sans, sans-serif" font-size="6.5" font-weight="bold" fill="#c9cbc2">W</text>
<text x="1251" y="161" font-family="Liberation Sans, sans-serif" font-size="6.5" font-weight="bold" fill="#c9cbc2">E</text>
<text x="1216" y="137" font-family="Liberation Sans, sans-serif" font-size="3.5" fill="#8a8d84" transform="rotate(-14 1216 137)">TOP</text>
<text x="1226" y="158" font-family="Liberation Sans, sans-serif" font-size="3.5" fill="#8a8d84" transform="rotate(-25 1226 158)">RIGHT</text>
<rect x="1252" y="186.5" width="17" height="58.5" rx="2.5" fill="rgba(226,228,214,0.85)" stroke="#aeb0a4" stroke-width="0.7"/>
<circle cx="1260.5" cy="202" r="4" fill="#e9e9e2" stroke="#a9aaa2" stroke-width="1.2"/><circle cx="1260.5" cy="202" r="1.8" fill="none" stroke="#c4c5bd" stroke-width="0.7"/>
<rect x="1257.5" y="219" width="4" height="4" fill="#a5cfa0"/><circle cx="1262" cy="224" r="1.8" fill="none" stroke="#8aa" stroke-width="0.7"/>
<circle cx="1264.5" cy="190" r="1" fill="none" stroke="#999" stroke-width="0.5"/><circle cx="1264.5" cy="241.5" r="1" fill="none" stroke="#999" stroke-width="0.5"/>
<circle cx="1260.5" cy="213" r="0.6" fill="#999"/><circle cx="1260.5" cy="233" r="0.6" fill="#999"/>
</g></svg>
<div class="abs" id="titlebar"></div>
<div class="abs" id="ribbon"></div><div class="abs" id="optbar"></div><div class="abs" id="tabbar"></div>
<div class="abs" id="topblack"></div>
<div class="abs" style="left:3px;top:4px;width:10px;height:11px;border-radius:1.5px;background:linear-gradient(#2d6fe0,#0a2a9a);color:#fff;font-size:7px;font-weight:bold;line-height:9px;text-align:center">R</div>
<svg class="abs" style="left:15px;top:4.500px" width="10" height="10" viewBox="0 0 10 10" fill="none" stroke="#888" stroke-width="1"><rect x="1.500" y="2" width="7" height="6.500" fill="#cfcfcf"/><path d="M1.500 4h7M4 4v4.500"/></svg>
<svg class="abs" style="left:28px;top:4.500px" width="10" height="10" viewBox="0 0 10 10" fill="none" stroke="#999" stroke-width="1"><path d="M1 8.500V2.500h2.500l1 1h3v1.500M1 8.500l1.500-3.500h6.500l-1.500 3.500z"/></svg>
<svg class="abs" style="left:41px;top:4.500px" width="10" height="10" viewBox="0 0 10 10" fill="none" stroke="#777" stroke-width="1"><path d="M1.500 1.500h6l1.500 1.500v6h-7.500z" fill="#9a9a9a"/><rect x="3" y="1.500" width="3.500" height="2.500" fill="#e4e4e4" stroke="none"/><rect x="3" y="6" width="4" height="3" fill="#e4e4e4" stroke="none"/></svg>
<svg class="abs" style="left:53px;top:4.500px" width="10" height="10" viewBox="0 0 10 10" fill="none" stroke="#999" stroke-width="1"><rect x="1.500" y="3" width="6" height="5.500" fill="#d0d0d0"/><path d="M5 1.500h3.500v3.500M3 6h3"/></svg>
<svg class="abs" style="left:71px;top:4.500px" width="10" height="10" viewBox="0 0 10 10" fill="none" stroke="#c2c2c2" stroke-width="1"><path d="M1.500 5.500q3-3.500 7-1M1.500 5.500l.500-2.500M1.500 5.500l2.500.300"/></svg>
<svg class="abs" style="left:89px;top:4.500px" width="10" height="10" viewBox="0 0 10 10" fill="none" stroke="#c2c2c2" stroke-width="1"><path d="M8.500 5.500q-3-3.500-7-1M8.500 5.500l-.500-2.500M8.500 5.500l-2.500.300"/></svg>
<svg class="abs" style="left:107px;top:4.500px" width="10" height="10" viewBox="0 0 10 10" fill="none" stroke="#808080" stroke-width="1"><rect x="1" y="4" width="8" height="3.500" rx="1"/><path d="M2.500 4V1.500h5V4M2.500 7.500v1.500h5V7.500"/></svg>
<svg class="abs" style="left:119px;top:4.500px" width="10" height="10" viewBox="0 0 10 10" fill="none" stroke="#909090" stroke-width="1"><rect x="1.500" y="2" width="7" height="6.500"/><path d="M1.500 4h7M5 4v4.500M3 6h1"/></svg>
<svg class="abs" style="left:134px;top:4.500px" width="10" height="10" viewBox="0 0 10 10" fill="none" stroke="#999" stroke-width="1"><path d="M1.500 8.500V2.500h6.500v2.500M5.500 2.500v3"/></svg>
<svg class="abs" style="left:150px;top:4.500px" width="10" height="10" viewBox="0 0 10 10" fill="none" stroke="#888" stroke-width="1"><path d="M1 3.500h8M1 6.500h8M1 3.500v3M9 3.500v3"/></svg>
<svg class="abs" style="left:167px;top:4.500px" width="10" height="10" viewBox="0 0 10 10" fill="none" stroke="#aaa" stroke-width="1"><path d="M1.500 2l6 6M7.500 8l1-1M1.500 2l.500 2.500"/></svg>
<svg class="abs" style="left:180px;top:4.500px" width="10" height="10" viewBox="0 0 10 10" fill="none" stroke="#999" stroke-width="1"><circle cx="6" cy="4" r="2"/><path d="M4.500 5.500L1.500 8.500"/></svg>
<svg class="abs" style="left:192px;top:4.500px" width="10" height="10" viewBox="0 0 10 10" fill="none" stroke="#909090" stroke-width="1"><path d="M2 8.500L5 1.500l3 7M3.200 6h3.600"/></svg>
<svg class="abs" style="left:207px;top:4.500px" width="10" height="10" viewBox="0 0 10 10" fill="none" stroke="#777" stroke-width="1"><path d="M1 5.500L5 1.500l4 4M2.500 5v3.500h5V5"/></svg>
<svg class="abs" style="left:225px;top:4.500px" width="10" height="10" viewBox="0 0 10 10" fill="none" stroke="#888" stroke-width="1"><path d="M5 1l2.500 2.500L5 6 2.500 3.500zM5 6v3"/></svg>
<svg class="abs" style="left:236px;top:4.500px" width="10" height="10" viewBox="0 0 10 10" fill="none" stroke="#999" stroke-width="1"><path d="M1.500 2.500h7M1.500 5h7M1.500 7.500h7" stroke-width=".700"/><path d="M1.500 5h4" stroke-width="1.500"/></svg>
<svg class="abs" style="left:253px;top:4.500px" width="10" height="10" viewBox="0 0 10 10" fill="none" stroke="#999" stroke-width="1"><rect x="1.500" y="2.500" width="4" height="4"/><rect x="4.500" y="4.500" width="4" height="4" fill="#ccc"/></svg>
<svg class="abs" style="left:265px;top:4.500px" width="10" height="10" viewBox="0 0 10 10" fill="none" stroke="#909090" stroke-width="1"><rect x="1" y="2" width="8" height="6" rx="1"/><rect x="5" y="4.500" width="3.500" height="2.500" fill="#bbb"/></svg>
<div class="abs" style="left:66px;top:9px;width:2px;height:2px;background:#555;border-radius:1px"></div>
<div class="abs" style="left:84px;top:9px;width:2px;height:2px;background:#555;border-radius:1px"></div>
<div class="abs" style="left:102px;top:9px;width:2px;height:2px;background:#555;border-radius:1px"></div>
<div class="abs" style="left:163px;top:9px;width:2px;height:2px;background:#555;border-radius:1px"></div>
<div class="abs" style="left:220px;top:9px;width:2px;height:2px;background:#555;border-radius:1px"></div>
<div class="abs" style="left:277px;top:9px;width:2px;height:2px;background:#555;border-radius:1px"></div>
<svg class="abs" style="left:284px;top:8px" width="5" height="5" viewBox="0 0 5 5"><path d="M.500 .500h4M.500 2h4L2.500 4.500z" fill="#555" stroke="#555" stroke-width=".500"/></svg>
<div class="abs" style="left:132px;top:4px;width:1px;height:11px;background:#c8c8c8"></div>
<div class="abs" style="left:148px;top:4px;width:1px;height:11px;background:#c8c8c8"></div>
<div class="abs" style="left:205px;top:4px;width:1px;height:11px;background:#c8c8c8"></div>
<div class="abs" style="left:250px;top:4px;width:1px;height:11px;background:#c8c8c8"></div>
<div class="t" style="left:600.7px;top:5.7px;font-size:5.95px;color:#444">Autodesk Revit 2025 - Architectural_Apex_Residence.rvt - 3D View: {3D}</div>
<div class="t" style="left:1130px;top:7.6px;font-size:5.9px;color:#444">Abirmaher</div>
<svg class="abs" style="left:1101px;top:8.500px" width="3" height="4" viewBox="0 0 3 4"><path d="M3 0v4L0 2z" fill="#444"/></svg>
<svg class="abs" style="left:1106px;top:6px" width="20" height="10" viewBox="0 0 20 10"><path d="M1.500 8V5l.800-3h1.400l.800 3v3zM5.500 8V5l.800-3h1.400l.800 3v3zM4.500 5h1" fill="none" stroke="#444" stroke-width="1"/><circle cx="16.5" cy="3" r="1.8" fill="#2a60c8"/><path d="M13.5 9q0-3.5 3-3.500t3 3.500z" fill="#2a60c8"/></svg>
<div class="abs" style="left:1173px;top:10px;width:2px;height:2px;background:#666;border-radius:1px"></div>
<svg class="abs" style="left:1179px;top:6px" width="34" height="10" viewBox="0 0 34 10"><path d="M1 2h1.500l1.500 4h4.500l1-3H3" fill="none" stroke="#666" stroke-width="0.9"/><circle cx="4.500" cy="8" r="0.8" fill="#666"/><circle cx="8" cy="8" r="0.8" fill="#666"/><line x1="14" y1="1" x2="14" y2="9" stroke="#bbb" stroke-width="0.6"/><circle cx="22" cy="5" r="3.600" fill="none" stroke="#3a62b8" stroke-width="0.9"/><text x="20.300" y="7.300" font-size="6" font-family="Liberation Sans, sans-serif" fill="#3a62b8" font-weight="bold">?</text><circle cx="30" cy="5" r="0.900" fill="#666"/></svg>
<div class="abs" style="left:1244.500px;top:12px;width:5.500px;height:1.400px;background:#222"></div>
<div class="abs" style="left:1256px;top:7px;width:7.500px;height:6.500px;border:1px solid #222;border-top-width:1.5px"></div>
<svg class="abs" style="left:1268px;top:6.500px" width="8" height="8" viewBox="0 0 8 8"><path d="M1 1l6 6M7 1l-6 6" stroke="#222" stroke-width="1.300"/></svg>
<div class="abs" style="left:2px;top:18px;width:22px;height:9.500px;background:#2a78ad"></div>
<div class="abs" style="left:25px;top:17px;width:42px;height:11px;background:#f2f2f2"></div>
<div class="rt" style="left:6.5px;top:19.1px;color:#fff">File</div>
<div class="rt" style="left:30.5px;width:32.5px;text-align:center">Architecture</div>
<div class="rt" style="left:73px;width:24px;text-align:center">Structure</div>
<div class="rt" style="left:107px;width:13px;text-align:center">Steel</div>
<div class="rt" style="left:129px;width:19px;text-align:center">Precast</div>
<div class="rt" style="left:158.5px;width:21.5px;text-align:center">Systems</div>
<div class="rt" style="left:190px;width:14.5px;text-align:center">Insert</div>
<div class="rt" style="left:214.5px;width:24.5px;text-align:center">Annotate</div>
<div class="rt" style="left:249px;width:21px;text-align:center">Analyze</div>
<div class="rt" style="left:279.5px;width:39.5px;text-align:center">Massing &amp; Site</div>
<div class="rt" style="left:329px;width:30.5px;text-align:center">Collaborate</div>
<div class="rt" style="left:369.5px;width:12.5px;text-align:center">View</div>
<div class="rt" style="left:392px;width:21.5px;text-align:center">Manage</div>
<div class="rt" style="left:423.5px;width:21.5px;text-align:center">Add-Ins</div>
<div class="rt" style="left:454.5px;width:19.0px;text-align:center">Modify</div>
<div class="abs" style="left:488px;top:20px;width:9px;height:5px;border:1px solid #888;border-radius:2px"></div><div class="abs" style="left:499px;top:22.500px;width:2px;height:2px;background:#666;border-radius:1px"></div>
<div class="rl" style="left:-3.5px;width:40px;top:49.500px">Modify</div>
<svg class="abs" style="left:9.0px;top:31.500px" width="15" height="15" viewBox="0 0 15 15" fill="none" stroke-width=".900"><path d="M5 1.500v11l2.600-2.400 1.800 4 1.600-.700-1.800-4h3.600z" fill="#f6f6f6" stroke="#cbcbcb"/></svg>
<div class="rl" style="left:22.5px;width:40px;top:49.500px">Wall</div>
<svg class="abs" style="left:35.0px;top:31.500px" width="15" height="15" viewBox="0 0 15 15" fill="none" stroke-width=".900"><path d="M2 2q5 2 11 0v9q-6 3-11 0z" fill="#e3e3e3" stroke="#cbcbcb"/></svg>
<div class="rl" style="left:43.5px;width:40px;top:49.500px">Door</div>
<svg class="abs" style="left:56.0px;top:31.500px" width="15" height="15" viewBox="0 0 15 15" fill="none" stroke-width=".900"><path d="M3 2l5-1v13l-5-1.500z" fill="#e3e3e3" stroke="#cbcbcb"/><rect x="8" y="1" width="4.500" height="11" fill="#cdcdcd"/></svg>
<div class="rl" style="left:65.5px;width:40px;top:49.500px">Window</div>
<svg class="abs" style="left:78.0px;top:31.500px" width="15" height="15" viewBox="0 0 15 15" fill="none" stroke-width=".900"><rect x="2.500" y="2" width="10" height="10" fill="#cdcdcd" stroke="#cbcbcb"/><path d="M7.500 2v10M2.500 7h10" stroke="#e8e8e8"/><rect x="1.500" y="12" width="12" height="1.500" fill="#cbcbcb"/></svg>
<div class="rl" style="left:100.0px;width:40px;top:49.500px">Component</div>
<svg class="abs" style="left:112.5px;top:31.500px" width="15" height="15" viewBox="0 0 15 15" fill="none" stroke-width=".900"><path d="M2 5l3-3h5v8l-3 3H2zM8 5l2-3h4v8l-2 3H8z" fill="#e3e3e3" stroke="#cbcbcb"/></svg>
<div class="rl" style="left:137.5px;width:40px;top:49.500px">Column</div>
<svg class="abs" style="left:150.0px;top:31.500px" width="15" height="15" viewBox="0 0 15 15" fill="none" stroke-width=".900"><rect x="5.500" y="1" width="4" height="13" rx="2" fill="#e3e3e3" stroke="#cbcbcb"/></svg>
<div class="rl" style="left:166.0px;width:40px;top:49.500px">Roof</div>
<svg class="abs" style="left:178.5px;top:31.500px" width="15" height="15" viewBox="0 0 15 15" fill="none" stroke-width=".900"><path d="M2 1.500h11v6H8v6H2z" fill="#e3e3e3" stroke="#cbcbcb"/><path d="M2 13.500l6-6 5-6" stroke="#cbcbcb" fill="none"/></svg>
<div class="rl" style="left:188.5px;width:40px;top:49.500px">Ceiling</div>
<svg class="abs" style="left:201.0px;top:31.500px" width="15" height="15" viewBox="0 0 15 15" fill="none" stroke-width=".900"><path d="M1.500 5l4-3h8v7l-4 3h-8z" fill="#e3e3e3" stroke="#cbcbcb"/><path d="M3 6h8" stroke="#cdcdcd" stroke-width="2"/></svg>
<div class="rl" style="left:212.5px;width:40px;top:49.500px">Floor</div>
<svg class="abs" style="left:225.0px;top:31.500px" width="15" height="15" viewBox="0 0 15 15" fill="none" stroke-width=".900"><path d="M1.500 6l5-4h7v7l-5 4h-7z" fill="#e3e3e3" stroke="#cbcbcb"/><path d="M3 11l9-3" stroke="#cdcdcd" stroke-width="2"/></svg>
<div class="rl" style="left:235.5px;width:40px;top:49.500px">Curtain<br>System</div>
<svg class="abs" style="left:248.0px;top:31.500px" width="15" height="15" viewBox="0 0 15 15" fill="none" stroke-width=".900"><path d="M2 3q6-2 11 0v9q-5 2-11 0z" fill="#e3e3e3" stroke="#cbcbcb"/><path d="M2 6q6 2 11 0M2 9q6 2 11 0M5.500 2.500v10M9.500 2.500v10" stroke="#cbcbcb" fill="none"/></svg>
<div class="rl" style="left:257.5px;width:40px;top:49.500px">Curtain<br>Grid</div>
<svg class="abs" style="left:270.0px;top:31.500px" width="15" height="15" viewBox="0 0 15 15" fill="none" stroke-width=".900"><rect x="2" y="1.500" width="11" height="12" fill="#f0f0f0" stroke="#cbcbcb"/><path d="M2 5.500h11M2 9.500h11M5.700 1.500v12M9.300 1.500v12" stroke="#cbcbcb"/></svg>
<div class="rl" style="left:281.5px;width:40px;top:49.500px">Mullion</div>
<svg class="abs" style="left:294.0px;top:31.500px" width="15" height="15" viewBox="0 0 15 15" fill="none" stroke-width=".900"><rect x="2" y="1.500" width="11" height="12" fill="#f0f0f0" stroke="#cbcbcb" stroke-width="1.500"/><path d="M2 5.500h11M2 9.500h11M7.500 1.500v12" stroke="#cbcbcb" stroke-width="1.500"/></svg>
<div class="rl" style="left:310.0px;width:40px;top:49.500px">Railing</div>
<svg class="abs" style="left:322.5px;top:31.500px" width="15" height="15" viewBox="0 0 15 15" fill="none" stroke-width=".900"><path d="M1.500 4h12M1.500 10h12" stroke="#bdbdbd" stroke-width="1.500"/><path d="M3 2v11M5.300 2v11M7.500 2v11M9.800 2v11M12 2v11" stroke="#c4c4c4"/></svg>
<div class="rl" style="left:334.0px;width:40px;top:49.500px">Ramp</div>
<svg class="abs" style="left:346.5px;top:31.500px" width="15" height="15" viewBox="0 0 15 15" fill="none" stroke-width=".900"><path d="M1 11l8-7 5 2v5z" fill="#e3e3e3" stroke="#cbcbcb"/></svg>
<div class="rl" style="left:353.5px;width:40px;top:49.500px">Stair</div>
<svg class="abs" style="left:366.0px;top:31.500px" width="15" height="15" viewBox="0 0 15 15" fill="none" stroke-width=".900"><path d="M2 8q2-6 8-6l3 3q-2 7-8 7z" fill="#e3e3e3" stroke="#cbcbcb"/><path d="M5 7l4 3" stroke="#cbcbcb"/></svg>
<div class="rl" style="left:374.5px;width:40px;top:49.500px">Model<br>Text</div>
<svg class="abs" style="left:387.0px;top:31.500px" width="15" height="15" viewBox="0 0 15 15" fill="none" stroke-width=".900"><path d="M2 13L7 2l5 11h-2.500l-1-2.500h-3l-1 2.500z" fill="#e3e3e3" stroke="#cbcbcb"/></svg>
<div class="rl" style="left:395.5px;width:40px;top:49.500px">Model<br>Line</div>
<svg class="abs" style="left:408.0px;top:31.500px" width="15" height="15" viewBox="0 0 15 15" fill="none" stroke-width=".900"><path d="M4 1.500v12M3 2q2 8 10 10" fill="none" stroke="#cbcbcb"/></svg>
<div class="rl" style="left:418.0px;width:40px;top:49.500px">Model<br>Group</div>
<svg class="abs" style="left:430.5px;top:31.500px" width="15" height="15" viewBox="0 0 15 15" fill="none" stroke-width=".900"><path d="M4 2H2v11h2M11 2h2v11h-2" fill="none" stroke="#cbcbcb"/><circle cx="7" cy="6.500" r="2.500" fill="#e3e3e3" stroke="#cbcbcb"/><rect x="7" y="7" width="3.500" height="3.500" fill="#e3e3e3" stroke="#cbcbcb"/></svg>
<div class="rl" style="left:444.5px;width:40px;top:49.500px">Room</div>
<svg class="abs" style="left:457.0px;top:31.500px" width="15" height="15" viewBox="0 0 15 15" fill="none" stroke-width=".900"><rect x="2" y="1.500" width="11" height="12" fill="#f0f0f0" stroke="#cbcbcb"/><rect x="4" y="4" width="8" height="8" fill="#c2c2c2"/></svg>
<div class="rl" style="left:469.5px;width:40px;top:49.500px">Room<br>Separator</div>
<svg class="abs" style="left:482.0px;top:31.500px" width="15" height="15" viewBox="0 0 15 15" fill="none" stroke-width=".900"><rect x="2" y="1.500" width="11" height="12" fill="#f0f0f0" stroke="#cbcbcb"/><rect x="4" y="3" width="8" height="5" fill="#c6c6c6"/><path d="M6 12l6-5" stroke="#c0c0c0" stroke-width="1.500"/></svg>
<div class="rl" style="left:494.5px;width:40px;top:49.500px">Tag<br>Room</div>
<svg class="abs" style="left:507.0px;top:31.500px" width="15" height="15" viewBox="0 0 15 15" fill="none" stroke-width=".900"><rect x="2" y="1.500" width="11" height="12" fill="#f0f0f0" stroke="#cbcbcb"/><rect x="4" y="3" width="8" height="6" fill="#c6c6c6"/><rect x="8" y="10" width="6" height="3.500" fill="#f4f4f4" stroke="#cbcbcb"/></svg>
<div class="rl" style="left:519.5px;width:40px;top:49.500px">Area</div>
<svg class="abs" style="left:532.0px;top:31.500px" width="15" height="15" viewBox="0 0 15 15" fill="none" stroke-width=".900"><rect x="1.500" y="1.500" width="12" height="12" fill="#d2d2d2" stroke="#cbcbcb"/><path d="M1.500 1.500l12 12M13.500 1.500l-12 12" stroke="#c0c0c0"/></svg>
<div class="rl" style="left:544.5px;width:40px;top:49.500px">Area<br>Boundary</div>
<svg class="abs" style="left:557.0px;top:31.500px" width="15" height="15" viewBox="0 0 15 15" fill="none" stroke-width=".900"><rect x="1.500" y="1.500" width="12" height="12" fill="#d4d4d4" stroke="#cbcbcb"/><path d="M1.500 1.500l12 12" stroke="#c0c0c0"/><path d="M8 12l5-5" stroke="#bcbcbc" stroke-width="1.500"/></svg>
<div class="rl" style="left:571.0px;width:40px;top:49.500px">Tag<br>Area</div>
<svg class="abs" style="left:583.5px;top:31.500px" width="15" height="15" viewBox="0 0 15 15" fill="none" stroke-width=".900"><rect x="1.500" y="1.500" width="12" height="12" fill="#d4d4d4" stroke="#cbcbcb"/><path d="M1.500 1.500l12 12M13.500 1.500l-12 12" stroke="#c0c0c0"/><rect x="8.500" y="10" width="6" height="3.500" fill="#f4f4f4" stroke="#cbcbcb"/></svg>
<div class="rl" style="left:593.5px;width:40px;top:49.500px">By<br>Face</div>
<svg class="abs" style="left:606.0px;top:31.500px" width="15" height="15" viewBox="0 0 15 15" fill="none" stroke-width=".900"><path d="M2 12l10-10M3 4l8 8" stroke="#cbcbcb" stroke-width="1.400"/><circle cx="12" cy="3" r="1.800" fill="#e3e3e3" stroke="#cbcbcb"/></svg>
<div class="rl" style="left:612.5px;width:40px;top:49.500px">Shaft</div>
<svg class="abs" style="left:625.0px;top:31.500px" width="15" height="15" viewBox="0 0 15 15" fill="none" stroke-width=".900"><path d="M4 2v11M11 2v11" stroke="#cbcbcb" stroke-width="1.500"/><path d="M7.500 1v13" stroke="#cbcbcb" stroke-dasharray="2 1"/></svg>
<div class="rl" style="left:632.5px;width:40px;top:49.500px">Wall</div>
<svg class="abs" style="left:645.0px;top:31.500px" width="15" height="15" viewBox="0 0 15 15" fill="none" stroke-width=".900"><path d="M1 7.500h13" stroke="#cbcbcb"/><rect x="5.500" y="2" width="4" height="4" fill="#cdcdcd"/><rect x="5.500" y="9" width="4" height="4" fill="#cdcdcd"/></svg>
<div class="rl" style="left:654.0px;width:40px;top:49.500px">Vertical</div>
<svg class="abs" style="left:666.5px;top:31.500px" width="15" height="15" viewBox="0 0 15 15" fill="none" stroke-width=".900"><path d="M2 3l11 6v4L2 7z" fill="#cdcdcd" stroke="#cbcbcb"/><path d="M5 1v13" stroke="#cbcbcb"/></svg>
<div class="rl" style="left:677.0px;width:40px;top:49.500px">Dormer</div>
<svg class="abs" style="left:689.5px;top:31.500px" width="15" height="15" viewBox="0 0 15 15" fill="none" stroke-width=".900"><path d="M3 13l3-7 6-4" fill="none" stroke="#cbcbcb" stroke-width="1.500"/><circle cx="12.500" cy="2.500" r="1.500" fill="#e3e3e3" stroke="#cbcbcb"/></svg>
<div class="rl" style="left:699.5px;width:40px;top:49.500px">Level</div>
<svg class="abs" style="left:712.0px;top:31.500px" width="15" height="15" viewBox="0 0 15 15" fill="none" stroke-width=".900"><path d="M1 5h3" stroke="#cbcbcb"/><circle cx="9" cy="7" r="3.500" fill="#d8d8d8" stroke="#cbcbcb"/><path d="M9 7h3.500A3.500 3.500 0 0 0 9 3.500z" fill="#bdbdbd"/></svg>
<div class="rl" style="left:718.0px;width:40px;top:49.500px">Grid</div>
<svg class="abs" style="left:730.5px;top:31.500px" width="15" height="15" viewBox="0 0 15 15" fill="none" stroke-width=".900"><path d="M4 3v11M10 3v11M1 6h13M1 11h13" stroke="#cbcbcb"/><circle cx="4" cy="2" r="1.500" fill="#f4f4f4" stroke="#cbcbcb"/><circle cx="10" cy="2" r="1.500" fill="#f4f4f4" stroke="#cbcbcb"/></svg>
<div class="rl" style="left:740.5px;width:40px;top:49.500px">Set</div>
<svg class="abs" style="left:753.0px;top:31.500px" width="15" height="15" viewBox="0 0 15 15" fill="none" stroke-width=".900"><path d="M1.500 5l11-3v8l-11 3z" fill="#d0d0d0" stroke="#cbcbcb"/><path d="M1.500 9l11-3M5 4v8M9 3v8" stroke="#e6e6e6"/></svg>
<div class="rl" style="left:759.0px;width:40px;top:49.500px">Show</div>
<svg class="abs" style="left:771.5px;top:31.500px" width="15" height="15" viewBox="0 0 15 15" fill="none" stroke-width=".900"><path d="M1.500 4l10-2v8l-10 2z" fill="#ececec" stroke="#cbcbcb"/><path d="M1.500 8l10-2M5 3.300v8M8.500 2.600v8" stroke="#cbcbcb"/><circle cx="12.500" cy="11" r="1.800" fill="#e3e3e3" stroke="#cbcbcb"/></svg>
<div class="rl" style="left:775.0px;width:40px;top:49.500px">Ref<br>Plane</div>
<svg class="abs" style="left:787.5px;top:31.500px" width="15" height="15" viewBox="0 0 15 15" fill="none" stroke-width=".900"><path d="M1.500 12l4-10h8l-4 10z" fill="#f0f0f0" stroke="#cbcbcb"/><path d="M9 13l4-4" stroke="#c0c0c0" stroke-width="1.500"/></svg>
<div class="rl" style="left:798.5px;width:40px;top:49.500px">Viewer</div>
<svg class="abs" style="left:811.0px;top:31.500px" width="15" height="15" viewBox="0 0 15 15" fill="none" stroke-width=".900"><rect x="1.500" y="1" width="12" height="13" fill="#f2f2f2" stroke="#c4c4c4" stroke-width="1.300"/><rect x="4" y="4" width="7" height="7" fill="#c8c8c8"/></svg>
<div class="abs" style="left:41px;top:58px;width:2px;height:2px;background:#aaa;border-radius:1px"></div>
<div class="abs" style="left:119px;top:58px;width:2px;height:2px;background:#aaa;border-radius:1px"></div>
<div class="abs" style="left:156px;top:58px;width:2px;height:2px;background:#aaa;border-radius:1px"></div>
<div class="abs" style="left:185px;top:58px;width:2px;height:2px;background:#aaa;border-radius:1px"></div>
<div class="abs" style="left:231px;top:58px;width:2px;height:2px;background:#aaa;border-radius:1px"></div>
<div class="abs" style="left:329px;top:58px;width:2px;height:2px;background:#aaa;border-radius:1px"></div>
<div class="abs" style="left:449px;top:55.5px;width:2px;height:2px;background:#aaa;border-radius:1px"></div>
<div class="abs" style="left:525px;top:56px;width:2px;height:2px;background:#aaa;border-radius:1px"></div>
<div class="abs" style="left:539px;top:58px;width:2px;height:2px;background:#aaa;border-radius:1px"></div>
<div class="abs" style="left:598px;top:56px;width:2px;height:2px;background:#aaa;border-radius:1px"></div>
<div class="abs" style="left:760px;top:58px;width:2px;height:2px;background:#aaa;border-radius:1px"></div>
<div class="abs" style="left:30px;top:30px;width:1px;height:44px;background:#e6e6e6"></div>
<div class="abs" style="left:316px;top:30px;width:1px;height:44px;background:#e6e6e6"></div>
<div class="abs" style="left:384px;top:30px;width:1px;height:44px;background:#e6e6e6"></div>
<div class="abs" style="left:452px;top:30px;width:1px;height:44px;background:#e6e6e6"></div>
<div class="abs" style="left:603px;top:30px;width:1px;height:44px;background:#e6e6e6"></div>
<div class="abs" style="left:710px;top:30px;width:1px;height:44px;background:#e6e6e6"></div>
<div class="abs" style="left:748px;top:30px;width:1px;height:44px;background:#e6e6e6"></div>
<div class="abs" style="left:836px;top:30px;width:1px;height:44px;background:#e6e6e6"></div>
<div class="pt" style="left:4.5px;top:67px;">Select &#9662;</div>
<div class="pt" style="left:165px;top:67px;">Build</div>
<div class="pt" style="left:334px;top:67px;">Circulation</div>
<div class="pt" style="left:410px;top:67px;">Model</div>
<div class="pt" style="left:507px;top:67px;">Room &amp; Area &#9662;</div>
<div class="pt" style="left:644px;top:67px;">Opening</div>
<div class="pt" style="left:720px;top:67px;">Datum</div>
<div class="pt" style="left:775px;top:67px;">Work Plane</div>
<div class="abs" style="left:185px;top:90px;width:64px;height:11.500px;background:#fff"></div>
<svg class="abs" style="left:115.500px;top:91.500px" width="9" height="8" viewBox="0 0 9 8"><path d="M1 1h3.500l1.500 1.500h2v4.500h-7z" fill="none" stroke="#b4b4b4" stroke-width="0.900"/></svg>
<div class="t" style="left:127px;top:92.8px;font-size:5.800px;color:#bdbdbd">A001 - Title Sheet</div>
<svg class="abs" style="left:187px;top:91px" width="10" height="9" viewBox="0 0 10 9"><path d="M1 4.500L5 1l4 3.500M2 4v4h6V4" fill="none" stroke="#444" stroke-width="1"/></svg>
<div class="t" style="left:199.5px;top:92.8px;font-size:5.800px;color:#aaa">{3D}</div>
<svg class="abs" style="left:240.500px;top:92.500px" width="6" height="6" viewBox="0 0 6 6"><path d="M.5.500l5 5M5.500.500l-5 5" stroke="#333" stroke-width="1"/></svg>
<svg class="abs" style="left:1271px;top:92px" width="6" height="6" viewBox="0 0 6 6"><path d="M1 1h4M1.500 2.500l1.500 2 1.500-2z" stroke="#888" fill="#888" stroke-width="0.600"/></svg><div class="abs" id="left"></div>
<div class="abs" style="left:0;top:90px;width:112px;height:10.5px;background:#e2e2e2"></div>
<div class="t" style="left:3px;top:92.8px;font-size:5.9px;color:#333">Properties</div>
<div class="abs" style="left:111px;top:101px;width:2px;height:583px;background:#e9e9e9"></div>
<div class="abs" style="left:4px;top:100.5px;width:105px;height:33.5px;background:#f3f3f3;border:1px solid #dcdcdc"></div>
<div class="abs" style="left:36px;top:101px;width:1px;height:32px;background:#dcdcdc"></div>
<svg class="abs" style="left:12px;top:108px" width="17" height="18" viewBox="0 0 17 18"><path d="M1.500 9L8.500 2l7 7" fill="none" stroke="#666" stroke-width="1.600"/><path d="M3.500 8.500L8.500 4l5 4.500V16h-10z" fill="#c8c8c8" stroke="#777" stroke-width="0.800"/><rect x="6.800" y="10.500" width="3.400" height="5.500" fill="#f2e070" stroke="#886" stroke-width="0.500"/></svg>
<div class="t" style="left:39px;top:115px;font-size:5.9px;color:#444">3D View</div>
<svg class="abs" style="left:102px;top:115.500px" width="5" height="4" viewBox="0 0 5 4"><path d="M.500 .500h4L2.500 3z" fill="#555"/></svg>
<div class="t" style="left:4.5px;top:138.5px;font-size:5.800px;color:#444">3D View: {3D}</div>
<svg class="abs" style="left:63.500px;top:139.500px" width="5" height="4" viewBox="0 0 5 4"><path d="M.500 .500h4L2.500 3z" fill="#666"/></svg>
<svg class="abs" style="left:72px;top:137px" width="9" height="9" viewBox="0 0 9 9"><rect x=".500" y=".500" width="3.500" height="3.500" fill="#eee" stroke="#666" stroke-width=".700"/><rect x="4.700" y=".500" width="3.500" height="3.500" fill="#eee" stroke="#666" stroke-width=".700"/><rect x=".500" y="4.700" width="3.500" height="3.500" fill="#eee" stroke="#666" stroke-width=".700"/><rect x="4.700" y="4.700" width="3.500" height="3.500" fill="#eee" stroke="#666" stroke-width=".700"/></svg>
<div class="t" style="left:83px;top:138.5px;font-size:5.800px;color:#555">Edit Type</div>
<div class="abs" style="left:3px;top:147.500px;width:66px;height:1px;background:#d4d4d4"></div>
<div class="abs" style="left:1px;top:150px;width:101px;height:225px;background:#fbfbfb"></div>
<div class="ph" style="top:150.5px">Graphics</div>
<svg class="abs" style="left:95.500px;top:152.5px" width="4" height="6" viewBox="0 0 4 6"><path d="M.3 2.600L2 .500l1.700 2.100zM.3 3.400L2 5.500l1.700-2.100z" fill="#444"/></svg>
<div class="pl" style="top:158.9px;color:#333">View Scale</div>
<div class="abs" style="left:49.500px;top:158.9px;width:46px;height:8.500px;border:1px solid #222;background:#fff;font-size:5.700px;line-height:6.500px;padding-left:2px;color:#999">1 : 100</div>
<div class="pl" style="top:167.9px;color:#aaa">Scale Value&nbsp;&nbsp;&nbsp; 1:</div>
<div class="pv" style="top:167.9px;color:#bbb">100</div>
<div class="pl" style="top:176.9px;color:#333">Detail Level</div>
<div class="pv" style="top:176.9px">Medium</div>
<div class="pl" style="top:185.9px;color:#333">Parts Visibility</div>
<div class="pv" style="top:185.9px">Show Original</div>
<div class="pl" style="top:194.9px;color:#333">Visibility/Grap...</div>
<div class="btn" style="top:195.9px">Edit...</div>
<div class="pl" style="top:203.9px;color:#333">Graphic Displ...</div>
<div class="btn" style="top:204.9px">Edit...</div>
<div class="pl" style="top:212.9px;color:#333">Discipline</div>
<div class="pv" style="top:212.9px">Architectural</div>
<div class="pl" style="top:221.9px;color:#333">Show Hidden ...</div>
<div class="pv" style="top:221.9px">By Discipline</div>
<div class="pl" style="top:230.9px;color:#333">Default Analy...</div>
<div class="pv" style="top:230.9px">None</div>
<div class="pl" style="top:239.9px;color:#333">Show Grids</div>
<div class="btn" style="top:240.9px">Edit...</div>
<div class="pl" style="top:248.9px;color:#333">Sun Path</div>
<div class="cb" style="top:250.4px"></div>
<div class="ph" style="top:258.5px">Extents</div>
<svg class="abs" style="left:95.500px;top:260.5px" width="4" height="6" viewBox="0 0 4 6"><path d="M.3 2.600L2 .500l1.700 2.100zM.3 3.400L2 5.500l1.700-2.100z" fill="#444"/></svg>
<div class="pl" style="top:266.9px;color:#333">Crop View</div>
<div class="cb" style="top:268.4px"></div>
<div class="pl" style="top:275.9px;color:#333">Crop Region ...</div>
<div class="cb" style="top:277.4px"></div>
<div class="pl" style="top:284.9px;color:#333">Annotation Cr...</div>
<div class="cb" style="top:286.4px"></div>
<div class="pl" style="top:293.9px;color:#333">Far Clip Active</div>
<div class="cb" style="top:295.4px"></div>
<div class="pl" style="top:302.9px;color:#aaa">Far Clip Offset</div>
<div class="pv" style="top:302.9px;color:#bbb">304800.0</div>
<div class="pl" style="top:311.9px;color:#333">Scope Box</div>
<div class="pv" style="top:311.9px">None</div>
<div class="pl" style="top:320.9px;color:#333">Section Box</div>
<div class="cb" style="top:322.4px;background:#555;border-color:#444"></div><svg class="abs" style="left:52px;top:323.4px" width="4" height="4" viewBox="0 0 4 4"><path d="M.500 2l1 1.200L3.500 .600" fill="none" stroke="#fff" stroke-width=".800"/></svg>
<div class="ph" style="top:330.5px">Camera</div>
<svg class="abs" style="left:95.500px;top:332.5px" width="4" height="6" viewBox="0 0 4 6"><path d="M.3 2.600L2 .500l1.700 2.100zM.3 3.400L2 5.500l1.700-2.100z" fill="#444"/></svg>
<div class="pl" style="top:338.9px;color:#333">Rendering Set...</div>
<div class="btn" style="top:339.9px">Edit...</div>
<div class="pl" style="top:347.9px;color:#aaa">Locked Orient...</div>
<div class="cb" style="top:349.4px;border-color:#ccc"></div>
<div class="pl" style="top:356.9px;color:#333">Projection Mo...</div>
<div class="pv" style="top:356.9px">Orthographic</div>
<div class="pl" style="top:365.9px;color:#333">Eye Elevation</div>
<div class="pv" style="top:365.9px">20631.8</div>
<div class="abs" style="left:103px;top:150px;width:7px;height:226px;background:#f2f2f2"></div>
<div class="abs" style="left:105.500px;top:160px;width:2px;height:128px;background:#cfcfcf;border-radius:1px"></div>
<svg class="abs" style="left:104px;top:152px" width="5" height="4" viewBox="0 0 5 4"><path d="M.500 3L2.500 1l2 2" fill="none" stroke="#999" stroke-width=".800"/></svg>
<svg class="abs" style="left:104px;top:368.500px" width="5" height="4" viewBox="0 0 5 4"><path d="M.500 1L2.500 3l2-2" fill="none" stroke="#777" stroke-width=".800"/></svg>
<div class="abs" style="left:0;top:375.500px;width:111px;height:11px;background:#ececec"></div>
<div class="abs" style="left:3px;top:376px;width:10.500px;height:10px;background:#a8d4f0"></div>
<svg class="abs" style="left:4px;top:377px" width="34" height="8" viewBox="0 0 34 8"><path d="M1 2h3M1 4h3M1 6h3M6 1v6M5 5.500l1 1.500 1-1.500" stroke="#3a7ab8" stroke-width=".800" fill="none"/><path d="M14 1v6M13 5.500l1 1.500 1-1.500M17 1.500v5M19 1.500v5M16.300 2.500h1.400M18.300 5.500h1.400" stroke="#555" stroke-width=".800" fill="none"/><path d="M26.500 1v6M25.500 5.500l1 1.500 1-1.500M29.500 1v6M28.500 2.500l1-1.500 1 1.500" stroke="#555" stroke-width=".800" fill="none"/></svg>
<div class="abs" style="left:80px;top:376.500px;width:28.500px;height:9px;background:#e6e6e6;border:1px solid #dcdcdc;font-size:5.800px;line-height:7px;text-align:center;color:#c4c4c4">Apply</div>
<div class="abs" style="left:0;top:386.500px;width:111px;height:11px;background:#dcdcdc"></div>
<div class="t" style="left:3px;top:390px;font-size:5.900px;color:#333;width:109px;overflow:hidden">Project Browser - Architectural_Apex_R...</div>
<div class="abs" style="left:1px;top:397.500px;width:110px;height:286px;background:#fcfcfc"></div>
<div class="abs" style="left:3px;top:398.500px;width:105px;height:14.500px;background:#fff;border-bottom:1px solid #e4e4e4"></div>
<svg class="abs" style="left:10px;top:402.500px" width="10" height="10" viewBox="0 0 10 10"><circle cx="4" cy="4" r="2.800" fill="none" stroke="#555" stroke-width="1"/><path d="M6 6l3 3" stroke="#555" stroke-width="1.200"/></svg>
<div class="t" style="left:23px;top:405px;font-size:5.800px;color:#c8c8c8">Search</div>
<div class="abs" style="left:0;top:414px;width:111px;height:270px;overflow:hidden">
<div class="mn" style="left:5px;top:7.5px"></div>
<svg class="abs" style="left:13px;top:3.5px" width="9" height="9" viewBox="0 0 9 9"><path d="M1 3V1h2M6 1h2v2M8 6v2H6M3 8H1V6" fill="none" stroke="#555" stroke-width=".900"/><circle cx="4.500" cy="4.500" r="1.800" fill="none" stroke="#555" stroke-width=".800"/></svg>
<div class="tr" style="left:24px;top:3px">Views (all)</div>
<div class="mn" style="left:13px;top:17.5px"></div>
<div class="tr" style="left:21.500px;top:13px">Floor Plans</div>
<div class="abs" style="left:15px;top:28px;width:12px;height:0;border-top:1px dotted #ddd"></div>
<div class="ic b" style="top:24px"></div>
<div class="tr" style="left:39.500px;top:23px;max-width:63px;overflow:hidden">Level 1</div>
<div class="abs" style="left:15px;top:38px;width:12px;height:0;border-top:1px dotted #ddd"></div>
<div class="ic b" style="top:34px"></div>
<div class="tr" style="left:39.500px;top:33px;max-width:63px;overflow:hidden">Level 2</div>
<div class="abs" style="left:15px;top:48px;width:12px;height:0;border-top:1px dotted #ddd"></div>
<div class="ic b" style="top:44px"></div>
<div class="tr" style="left:39.500px;top:43px;max-width:63px;overflow:hidden">Site</div>
<div class="mn" style="left:13px;top:57.5px"></div>
<div class="tr" style="left:21.500px;top:53px">3D Views</div>
<div class="abs" style="left:15px;top:68px;width:12px;height:0;border-top:1px dotted #ddd"></div>
<div class="ic" style="top:64px"></div>
<div class="tr" style="left:39.500px;top:63px;max-width:63px;overflow:hidden">Approach</div>
<div class="abs" style="left:15px;top:78px;width:12px;height:0;border-top:1px dotted #ddd"></div>
<div class="ic" style="top:74px"></div>
<div class="tr" style="left:39.500px;top:73px;max-width:63px;overflow:hidden">From Yard</div>
<div class="abs" style="left:15px;top:88px;width:12px;height:0;border-top:1px dotted #ddd"></div>
<div class="ic" style="top:84px"></div>
<div class="tr" style="left:39.500px;top:83px;max-width:63px;overflow:hidden">Kitchen</div>
<div class="abs" style="left:15px;top:98px;width:12px;height:0;border-top:1px dotted #ddd"></div>
<div class="ic" style="top:94px"></div>
<div class="tr" style="left:39.500px;top:93px;max-width:63px;overflow:hidden">Living Room</div>
<div class="abs" style="left:15px;top:108px;width:12px;height:0;border-top:1px dotted #ddd"></div>
<div class="ic" style="top:104px"></div>
<div class="tr" style="left:39.500px;top:103px;max-width:63px;overflow:hidden">Section Perspective</div>
<div class="abs" style="left:15px;top:118px;width:12px;height:0;border-top:1px dotted #ddd"></div>
<div class="ic b" style="top:114px"></div>
<div class="tr" style="left:39.500px;top:113px;max-width:63px;overflow:hidden">Solar Analysis</div>
<div class="abs" style="left:1px;top:123px;width:101px;height:10px;background:#ececec"></div>
<div class="abs" style="left:15px;top:128px;width:12px;height:0;border-top:1px dotted #ddd"></div>
<div class="ic" style="top:124px"></div>
<div class="tr" style="left:39.500px;top:123px;font-weight:bold;color:#222;max-width:63px;overflow:hidden">{3D}</div>
<div class="mn" style="left:13px;top:137.5px"></div>
<div class="tr" style="left:21.500px;top:133px">Elevations (Building Elevation)</div>
<div class="abs" style="left:15px;top:148px;width:12px;height:0;border-top:1px dotted #ddd"></div>
<div class="ic b" style="top:144px"></div>
<div class="tr" style="left:39.500px;top:143px;max-width:63px;overflow:hidden">East</div>
<div class="abs" style="left:15px;top:158px;width:12px;height:0;border-top:1px dotted #ddd"></div>
<div class="ic" style="top:154px"></div>
<div class="tr" style="left:39.500px;top:153px;max-width:63px;overflow:hidden">North</div>
<div class="abs" style="left:15px;top:168px;width:12px;height:0;border-top:1px dotted #ddd"></div>
<div class="ic b" style="top:164px"></div>
<div class="tr" style="left:39.500px;top:163px;max-width:63px;overflow:hidden">South</div>
<div class="abs" style="left:15px;top:178px;width:12px;height:0;border-top:1px dotted #ddd"></div>
<div class="ic b" style="top:174px"></div>
<div class="tr" style="left:39.500px;top:173px;max-width:63px;overflow:hidden">West</div>
<div class="mn" style="left:13px;top:187.5px"></div>
<div class="tr" style="left:21.500px;top:183px">Sections (Building Section)</div>
<div class="abs" style="left:15px;top:198px;width:12px;height:0;border-top:1px dotted #ddd"></div>
<div class="ic b" style="top:194px"></div>
<div class="tr" style="left:39.500px;top:193px;max-width:63px;overflow:hidden">Building Section</div>
<div class="abs" style="left:15px;top:208px;width:12px;height:0;border-top:1px dotted #ddd"></div>
<div class="ic b" style="top:204px"></div>
<div class="tr" style="left:39.500px;top:203px;max-width:63px;overflow:hidden">Longitudinal Section</div>
<div class="abs" style="left:15px;top:218px;width:12px;height:0;border-top:1px dotted #ddd"></div>
<div class="ic b" style="top:214px"></div>
<div class="tr" style="left:39.500px;top:213px;max-width:63px;overflow:hidden">Stair Section</div>
<div class="mn" style="left:13px;top:227.5px"></div>
<div class="tr" style="left:21.500px;top:223px">Sections (Wall Section)</div>
<div class="abs" style="left:15px;top:238px;width:12px;height:0;border-top:1px dotted #ddd"></div>
<div class="ic b" style="top:234px"></div>
<div class="tr" style="left:39.500px;top:233px;max-width:63px;overflow:hidden">Typ. Wall Section</div>
<div class="mn" style="left:13px;top:247.5px"></div>
<div class="tr" style="left:21.500px;top:243px">Detail Views (Detail)</div>
<div class="abs" style="left:15px;top:258px;width:12px;height:0;border-top:1px dotted #ddd"></div>
<div class="ic b" style="top:254px"></div>
<div class="tr" style="left:39.500px;top:253px;max-width:63px;overflow:hidden">Main Stair Detail</div>
<div class="abs" style="left:15px;top:268px;width:12px;height:0;border-top:1px dotted #ddd"></div>
<div class="ic b" style="top:264px"></div>
<div class="tr" style="left:39.500px;top:263px;max-width:63px;overflow:hidden">Typical Floor Wall Conn...</div>
</div>
<div class="abs" style="left:103px;top:414px;width:7.500px;height:270px;background:#f4f4f4"></div>
<div class="abs" style="left:105.500px;top:427px;width:2px;height:130px;background:#d0d0d0;border-radius:1px"></div>
<svg class="abs" style="left:104px;top:418px" width="5" height="4" viewBox="0 0 5 4"><path d="M.500 3L2.500 1l2 2" fill="none" stroke="#999" stroke-width=".800"/></svg>
<svg class="abs" style="left:104px;top:677px" width="5" height="4" viewBox="0 0 5 4"><path d="M.500 1L2.500 3l2-2" fill="none" stroke="#777" stroke-width=".800"/></svg><div class="abs" style="left:0;top:14px;width:1px;height:683px;background:#8a8a8a"></div>
<div class="abs" style="left:1269px;top:101px;width:11px;height:583px;background:#f1f1f1"></div>
<svg class="abs" style="left:1271px;top:103.500px" width="6" height="4" viewBox="0 0 6 4"><path d="M.500 3.500L3 1l2.500 2.500" fill="none" stroke="#aaa" stroke-width=".900"/></svg>
<svg class="abs" style="left:1272px;top:669px" width="6" height="4" viewBox="0 0 6 4"><path d="M.500 .500L3 3l2.500-2.500" fill="none" stroke="#777" stroke-width=".900"/></svg>
<div class="abs" style="left:1272.500px;top:383px;width:2px;height:8px;background:#d8d8d8"></div>
<div class="abs" style="left:112px;top:674.700px;width:1157px;height:9.300px;background:#f7f7f7"></div>
<div class="t" style="left:125.5px;top:676.5px;font-size:5.800px;color:#555">1 : 100</div>
<svg class="abs" style="left:154.2px;top:675px" width="9" height="9" viewBox="0 0 9 9"><rect x="1" y="1.500" width="7" height="5.500" fill="#eee" stroke="#555" stroke-width=".900"/><path d="M2.500 3l4 3M6.500 3l-4 3" stroke="#555" stroke-width=".700"/></svg>
<svg class="abs" style="left:167.3px;top:675px" width="9" height="9" viewBox="0 0 9 9"><path d="M1 3l2.500-1.800h4.500v4.300L5.500 7.500H1z" fill="#4aa4e8" stroke="#2a7ac0" stroke-width=".600"/></svg>
<svg class="abs" style="left:180.3px;top:675px" width="9" height="9" viewBox="0 0 9 9"><circle cx="3.500" cy="3.500" r="2" fill="#f0b020"/><path d="M5.500 4.500l2.500 3.500" stroke="#3a9a8a" stroke-width="1.200"/></svg>
<svg class="abs" style="left:193.3px;top:675px" width="9" height="9" viewBox="0 0 9 9"><circle cx="4" cy="3.500" r="2.300" fill="none" stroke="#888" stroke-width=".800"/><rect x="4.500" y="4.500" width="3.500" height="3" fill="#6ab8a8"/></svg>
<svg class="abs" style="left:206.4px;top:675px" width="9" height="9" viewBox="0 0 9 9"><path d="M1.500 2h5v2.500h-2.500v3.500" fill="none" stroke="#4aa898" stroke-width="1.100"/><circle cx="7" cy="6" r="1.200" fill="#999"/></svg>
<svg class="abs" style="left:219.4px;top:675px" width="9" height="9" viewBox="0 0 9 9"><path d="M1 4.500h7M4.500 1.500v6.500" stroke="#666" stroke-width="1"/><rect x="5.500" y="5" width="2.500" height="2.500" fill="#d03030"/></svg>
<svg class="abs" style="left:232.4px;top:675px" width="9" height="9" viewBox="0 0 9 9"><path d="M1 4.500h7M4.500 1.500v6.500" stroke="#666" stroke-width="1"/><rect x="5.500" y="2" width="2.500" height="5" fill="#3aa898"/></svg>
<svg class="abs" style="left:245.5px;top:675px" width="9" height="9" viewBox="0 0 9 9"><path d="M1 4.500L4.500 1.500 8 4.500" fill="none" stroke="#555" stroke-width=".900"/><rect x="2.500" y="4.500" width="4" height="3" fill="#4ab0a0"/></svg>
<svg class="abs" style="left:258.5px;top:675px" width="9" height="9" viewBox="0 0 9 9"><path d="M1 6l2-3 1.500 2.500L6 3l2 3" fill="none" stroke="#444" stroke-width="1"/></svg>
<svg class="abs" style="left:271.5px;top:675px" width="9" height="9" viewBox="0 0 9 9"><circle cx="4.500" cy="3.500" r="2" fill="#3ab8a8"/><rect x="3.800" y="5.500" width="1.400" height="2.500" fill="#3a9888"/></svg>
<svg class="abs" style="left:284.5px;top:675px" width="9" height="9" viewBox="0 0 9 9"><rect x="1.500" y="2" width="4" height="3.500" fill="#d84030"/><rect x="4.500" y="4.500" width="3" height="3" fill="#e89030"/></svg>
<svg class="abs" style="left:297.6px;top:675px" width="9" height="9" viewBox="0 0 9 9"><rect x="1.500" y="2" width="5" height="4.500" fill="none" stroke="#888" stroke-width=".800"/><path d="M4 4.500h4.500v3h-4.500z" fill="#ddd" stroke="#888" stroke-width=".600"/></svg>
<svg class="abs" style="left:310.6px;top:675px" width="9" height="9" viewBox="0 0 9 9"><rect x="1.500" y="2" width="3" height="5.500" fill="#e8a020"/><rect x="5" y="3" width="3" height="4.500" fill="#999"/></svg>
<svg class="abs" style="left:323.6px;top:675px" width="9" height="9" viewBox="0 0 9 9"><circle cx="3.500" cy="5" r="2" fill="none" stroke="#666" stroke-width=".900"/><circle cx="6" cy="4" r="2" fill="none" stroke="#666" stroke-width=".900"/></svg>
<svg class="abs" style="left:336.7px;top:675px" width="9" height="9" viewBox="0 0 9 9"><path d="M1 3h7M3 1.500v6.500" stroke="#555" stroke-width=".800"/><rect x="5" y="4" width="3.500" height="3.500" fill="none" stroke="#3aa898" stroke-width=".900"/></svg>
<div class="t" style="left:350px;top:676px;font-size:6px;color:#aaa">&lt;</div>
<div class="abs" style="left:356px;top:676px;width:906px;height:7px;background:#e9e9e9;border-radius:2px"></div>
<div class="abs" style="left:804px;top:678.500px;width:9px;height:2px;background:#ccc"></div>
<div class="t" style="left:1262.5px;top:675.5px;font-size:6px;color:#777">&gt;</div>
<div class="abs" style="left:0;top:684px;width:1280px;height:13.500px;background:#f0f0f0"></div>
<div class="abs" style="left:0;top:695.500px;width:1280px;height:2px;background:#e0e0e0"></div>
<div class="t" style="left:3px;top:687.6px;font-size:5.900px;color:#555">Ready</div>
<div class="abs" style="left:736px;top:686px;width:7px;height:7px;background:#c4c6c0;border-radius:1px"></div>
<div class="t" style="left:750px;top:687.5px;font-size:5.600px;color:#c4c4c4">Workset1 (Not Editable)</div>
<svg class="abs" style="left:845px;top:689px" width="4" height="3" viewBox="0 0 4 3"><path d="M0 0h4L2 3z" fill="#ccc"/></svg>
<svg class="abs" style="left:855px;top:685.500px" width="18" height="9" viewBox="0 0 18 9"><circle cx="5" cy="2.500" r="1.500" fill="none" stroke="#aaa" stroke-width=".700"/><path d="M2.500 8q0-3 2.500-3t2.500 3" fill="none" stroke="#aaa" stroke-width=".700"/></svg>
<div class="t" style="left:867px;top:687.5px;font-size:5.600px;color:#bbb">:0</div>
<div class="abs" style="left:882px;top:686px;width:6.500px;height:7px;border-radius:3px;background:#c8c8c8"></div>
<div class="abs" style="left:901px;top:686px;width:7px;height:7px;border:1px solid #b8b8b8;background:#e2e2e2"></div>
<div class="abs" style="left:914.500px;top:686px;width:7px;height:6px;border:1px solid #999;background:#e8e8e8"></div>
<div class="t" style="left:928px;top:687.5px;font-size:5.600px;color:#c4c4c4">Main Model</div>
<svg class="abs" style="left:1023px;top:689px" width="4" height="3" viewBox="0 0 4 3"><path d="M0 0h4L2 3z" fill="#ccc"/></svg>
<svg class="abs" style="left:1141px;top:686px" width="9" height="8" viewBox="0 0 9 8"><path d="M1.500 1.500l3 5 1-2.200 2.200-.600z" fill="none" stroke="#666" stroke-width=".800"/><rect x="5.500" y=".800" width="2.600" height="2.200" fill="none" stroke="#999" stroke-width=".500"/></svg>
<svg class="abs" style="left:1154px;top:686px" width="9" height="8" viewBox="0 0 9 8"><path d="M1.500 1.500l3 5 1-2.200 2.200-.600z" fill="none" stroke="#666" stroke-width=".800"/><rect x="5.500" y=".800" width="2.600" height="2.200" fill="none" stroke="#999" stroke-width=".500"/></svg>
<svg class="abs" style="left:1167px;top:686px" width="9" height="8" viewBox="0 0 9 8"><path d="M1.500 1.500l3 5 1-2.200 2.200-.600z" fill="none" stroke="#666" stroke-width=".800"/><rect x="5.500" y=".800" width="2.600" height="2.200" fill="none" stroke="#999" stroke-width=".500"/></svg>
<svg class="abs" style="left:1180px;top:686px" width="9" height="8" viewBox="0 0 9 8"><path d="M1.500 1.500l3 5 1-2.200 2.200-.600z" fill="none" stroke="#666" stroke-width=".800"/><rect x="5.500" y=".800" width="2.600" height="2.200" fill="none" stroke="#999" stroke-width=".500"/></svg>
<svg class="abs" style="left:1193px;top:686px" width="9" height="8" viewBox="0 0 9 8"><path d="M1.500 1.500l3 5 1-2.200 2.200-.600z" fill="none" stroke="#666" stroke-width=".800"/><rect x="5.500" y=".800" width="2.600" height="2.200" fill="none" stroke="#999" stroke-width=".500"/></svg>
<svg class="abs" style="left:1206px;top:686px" width="9" height="8" viewBox="0 0 9 8"><path d="M1.500 1.500l3 5 1-2.200 2.200-.600z" fill="none" stroke="#666" stroke-width=".800"/><rect x="5.500" y=".800" width="2.600" height="2.200" fill="none" stroke="#999" stroke-width=".500"/></svg>
<svg class="abs" style="left:1218px;top:685.500px" width="16" height="9" viewBox="0 0 16 9"><path d="M1 1h7L5.500 4.500V8L3.500 7V4.500z" fill="none" stroke="#555" stroke-width=".900"/><text x="9" y="7.500" font-size="5.500" font-family="Liberation Sans, sans-serif" fill="#444">:0</text></svg>
<div class="abs" style="left:0;top:697.500px;width:1280px;height:22.500px;background:linear-gradient(90deg,#1b1e22 0%,#1d2026 60%,#23211f 90%,#2b2522 100%)"></div>
<div class="abs" style="left:773px;top:699px;width:20px;height:20px;background:#33373f;border-radius:2px"></div>
<div class="abs" style="left:778.500px;top:717.500px;width:9px;height:1.500px;background:#9ab;border-radius:1px"></div>
<svg class="abs" style="left:489.5px;top:702px" width="14" height="14" viewBox="0 0 14 14"><rect x="1" y="1" width="5.600" height="5.600" fill="#4cb0f4"/><rect x="7.400" y="1" width="5.600" height="5.600" fill="#4cb0f4"/><rect x="1" y="7.400" width="5.600" height="5.600" fill="#3a9be8"/><rect x="7.400" y="7.400" width="5.600" height="5.600" fill="#3a9be8"/></svg>
<svg class="abs" style="left:512px;top:702px" width="14" height="14" viewBox="0 0 14 14"><path d="M2 9Q2 2 8 2q4 0 4 4t-5 6q-5 0-5-3z" fill="#3a8af0"/><path d="M3 11q3-7 8-7v4q-3 4-8 3z" fill="#e8b020"/><path d="M5 11l4-5 3 1-3 5z" fill="#c040c0"/><rect x="4" y="10" width="6" height="2.500" fill="#f0d040"/></svg>
<svg class="abs" style="left:534px;top:702px" width="14" height="14" viewBox="0 0 14 14"><path d="M1 3h5l1 1.500h6V12H1z" fill="#e8a820"/><rect x="1" y="5.500" width="12" height="6.500" fill="#f8cc50"/></svg>
<svg class="abs" style="left:556.5px;top:702px" width="14" height="14" viewBox="0 0 14 14"><circle cx="7" cy="7" r="6" fill="#e04030"/><path d="M7 7L1.800 10A6 6 0 0 0 10 12.200z" fill="#30a050"/><path d="M7 7l3 5.200A6 6 0 0 0 12.200 4H7z" fill="#f8c820"/><circle cx="7" cy="7" r="2.600" fill="#4a88e8" stroke="#fff" stroke-width=".800"/><circle cx="11.500" cy="2.500" r="2.200" fill="#d83a2a"/></svg>
<svg class="abs" style="left:578.5px;top:702px" width="14" height="14" viewBox="0 0 14 14"><circle cx="7" cy="7" r="6" fill="#e04030"/><path d="M7 7L1.800 10A6 6 0 0 0 10 12.200z" fill="#30a050"/><path d="M7 7l3 5.200A6 6 0 0 0 12.200 4H7z" fill="#f8c820"/><circle cx="7" cy="7" r="2.600" fill="#4a88e8" stroke="#fff" stroke-width=".800"/><circle cx="11" cy="3" r="2" fill="#444"/></svg>
<svg class="abs" style="left:600.5px;top:702px" width="14" height="14" viewBox="0 0 14 14"><rect x="5" y="2" width="8" height="10" fill="#1a7ad8"/><rect x="1" y="4" width="7" height="7" fill="#0a58b0"/><text x="2.600" y="9.800" font-size="6" font-family="Liberation Sans, sans-serif" fill="#fff" font-weight="bold">O</text></svg>
<svg class="abs" style="left:622.5px;top:702px" width="14" height="14" viewBox="0 0 14 14"><circle cx="7" cy="7" r="6" fill="#f4f4f4"/><rect x="3" y="5.500" width="4" height="1.800" rx=".900" fill="#36c5f0"/><rect x="5.700" y="3" width="1.800" height="4" rx=".900" fill="#2eb67d"/><rect x="7" y="6.700" width="4" height="1.800" rx=".900" fill="#ecb22e"/><rect x="6.500" y="7.500" width="1.800" height="4" rx=".900" fill="#e01e5a"/></svg>
<svg class="abs" style="left:644px;top:702px" width="14" height="14" viewBox="0 0 14 14"><rect x="2" y="1.500" width="10" height="11" rx="1" fill="#2aa0b0"/><rect x="3.500" y="3" width="7" height="8" fill="#7fd0d8"/></svg>
<svg class="abs" style="left:666px;top:702px" width="14" height="14" viewBox="0 0 14 14"><rect x="1" y="1.500" width="12" height="11" rx="1.500" fill="#d42020"/><path d="M5 5l3 2-3 2z" fill="#fff"/><rect x="8.500" y="5" width="1.500" height="4" fill="#fff"/></svg>
<svg class="abs" style="left:688px;top:702px" width="14" height="14" viewBox="0 0 14 14"><path d="M7 1.500L13 12H9.500L7 7.500 4.500 12H1z" fill="#35c0c0"/><path d="M7 5l3 5.500H4z" fill="#1d2026"/></svg>
<svg class="abs" style="left:710px;top:702px" width="14" height="14" viewBox="0 0 14 14"><rect x="1" y="1" width="12" height="12" rx="1.500" fill="#e02424"/><text x="3.300" y="11.300" font-size="11" font-family="Liberation Sans, sans-serif" fill="#fff" font-weight="bold">S</text></svg>
<svg class="abs" style="left:732px;top:702px" width="14" height="14" viewBox="0 0 14 14"><circle cx="7" cy="7" r="5.500" fill="#b02020"/><path d="M2 10q5-8 10-5l-2 5q-4 3-8 0z" fill="#e8b040"/><path d="M5 2l5 3-6 6z" fill="#d8d8e8" opacity=".700"/></svg>
<svg class="abs" style="left:754px;top:702px" width="14" height="14" viewBox="0 0 14 14"><rect x="4.500" y="1.500" width="8.500" height="11" fill="#2a7ae0"/><rect x="1" y="3.500" width="7.500" height="7.500" fill="#1650b0"/><text x="1.800" y="9.600" font-size="6" font-family="Liberation Sans, sans-serif" fill="#fff" font-weight="bold">W</text></svg>
<svg class="abs" style="left:776px;top:702px" width="14" height="14" viewBox="0 0 14 14"><rect x="1.500" y="1" width="11" height="12" rx="1.500" fill="#1a5ad8"/><text x="4.200" y="8.500" font-size="7" font-family="Liberation Sans, sans-serif" fill="#fff" font-weight="bold">R</text><rect x="4" y="10" width="6" height="1" fill="#9cf"/></svg>
<div class="abs" style="left:539.5px;top:717.500px;width:3px;height:1.500px;background:#888;border-radius:1px"></div>
<div class="abs" style="left:562.0px;top:717.500px;width:3px;height:1.500px;background:#888;border-radius:1px"></div>
<div class="abs" style="left:606.0px;top:717.500px;width:3px;height:1.500px;background:#888;border-radius:1px"></div>
<div class="abs" style="left:628.0px;top:717.500px;width:3px;height:1.500px;background:#888;border-radius:1px"></div>
<div class="abs" style="left:715.5px;top:717.500px;width:3px;height:1.500px;background:#888;border-radius:1px"></div>
<div class="abs" style="left:759.5px;top:717.500px;width:3px;height:1.500px;background:#888;border-radius:1px"></div>
<div class="abs" style="left:511px;top:237px;width:232px;height:207px;background:#f1f1f1;border-radius:3.500px;box-shadow:0 0 1.5px rgba(0,0,0,.5),0 7px 16px rgba(0,0,0,.32)"></div>
<div class="t" style="left:515.5px;top:242.3px;font-size:5.800px;color:#444">Sync With Central</div>
<div class="t" style="left:516.5px;top:259.6px;font-size:6.800px;color:#44549a">Syncing with central. Please wait...</div>
<svg class="abs" style="left:526.500px;top:280px" width="10" height="8" viewBox="0 0 10 8"><path d="M1 4.300l2.500 2.500L8.800 1.200" fill="none" stroke="#74a45e" stroke-width="1.500"/></svg>
<svg class="abs" style="left:526.500px;top:304px" width="10" height="8" viewBox="0 0 10 8"><path d="M1 4.300l2.500 2.500L8.800 1.200" fill="none" stroke="#74a45e" stroke-width="1.500"/></svg>
<svg class="abs" style="left:526px;top:328px" width="11" height="9" viewBox="0 0 11 9"><path d="M1 3h5V1l4 3.500L6 8V6H1z" fill="#3a80c8" stroke="#2a60a0" stroke-width=".500"/></svg>
<div class="t" style="left:540px;top:283px;font-size:5.900px;color:#222">Save to local</div>
<div class="t" style="left:540px;top:307px;font-size:5.900px;color:#222">Reload latest</div>
<div class="t" style="left:540px;top:331px;font-size:5.900px;color:#222">Save to central</div>
<div class="t" style="left:540px;top:355px;font-size:5.900px;color:#222">Save to local</div>
<svg class="abs" style="left:593px;top:280px" width="115" height="9" viewBox="0 0 115 9"><rect width="115" height="9" fill="url(#pg)"/></svg>
<svg class="abs" style="left:593px;top:304px" width="115" height="9" viewBox="0 0 115 9"><rect width="115" height="9" fill="url(#pg)"/></svg>
<svg class="abs" style="left:593px;top:328px" width="115" height="9" viewBox="0 0 115 9"><rect width="115" height="9" fill="url(#pg)"/></svg>
<div class="t" style="left:593px;top:338.2px;font-size:5.750px;color:#333;font-style:italic">Uploading...(211.4KB/s, 0.0Byte remaining)</div>
<svg class="abs" style="left:641px;top:409px" width="8" height="11" viewBox="0 0 8 11"><path d="M1 .800v8l2-1.800 1.400 3 1.200-.500-1.400-3h2.600z" fill="#fff" stroke="#111" stroke-width=".800"/></svg>
</div></body></html>
